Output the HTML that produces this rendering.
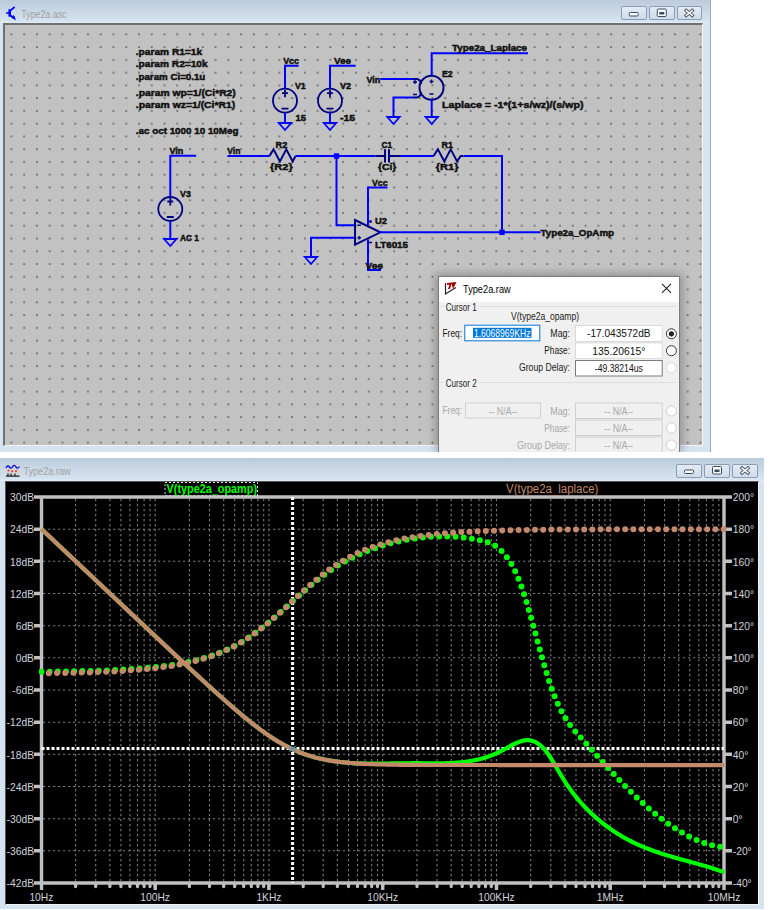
<!DOCTYPE html><html><head><meta charset="utf-8"><style>
html,body{margin:0;padding:0;background:#fff;width:770px;height:910px;overflow:hidden;font-family:"Liberation Sans", sans-serif;}
.abs{position:absolute;}
</style></head><body>
<div class="abs" style="left:0;top:0;width:710px;height:452px;background:linear-gradient(#bccbdb 0px,#d5e3f0 21px,#dfeaf7 22.5px,#d6e3f1 24px,#d6e3f1 100%);border-right:1px solid #9ca9b8;"></div><div class="abs" style="left:3px;top:23px;width:700px;height:423px;background:#c2c2c2;box-sizing:border-box;border-top:2px solid #707070;border-left:2px solid #707070;border-bottom:1px solid #f4f4f4;border-right:1px solid #f4f4f4;"></div><div class="abs" style="left:621px;top:6px;width:25.5px;height:14px;box-sizing:border-box;border:1px solid #8d9db4;border-radius:2px;background:linear-gradient(#e3ebf5,#cfdbea);"></div><div class="abs" style="left:649px;top:6px;width:25.5px;height:14px;box-sizing:border-box;border:1px solid #8d9db4;border-radius:2px;background:linear-gradient(#e3ebf5,#cfdbea);"></div><div class="abs" style="left:676.5px;top:6px;width:25.5px;height:14px;box-sizing:border-box;border:1px solid #8d9db4;border-radius:2px;background:linear-gradient(#e3ebf5,#cfdbea);"></div><svg class="abs" style="left:0;top:0;overflow:visible" width="1" height="1"><rect x="629.25" y="12.5" width="9" height="3.5" rx="1" fill="#fff" stroke="#3c4a60" stroke-width="1"/><rect x="657.25" y="9.0" width="9" height="7.5" rx="1" fill="#fff" stroke="#3c4a60" stroke-width="1"/><rect x="659.25" y="12.0" width="5" height="2.5" fill="#3c4a60"/><path d="M686.25,10.6 L692.25,15.4 M692.25,10.6 L686.25,15.4" stroke="#3c4a60" stroke-width="3.2" stroke-linecap="square"/><path d="M686.25,10.6 L692.25,15.4 M692.25,10.6 L686.25,15.4" stroke="#fff" stroke-width="1.5" stroke-linecap="square"/></svg><svg class="abs" style="left:0;top:0" width="30" height="24"><path d="M14.6,7 L10,10.8 M10,15 L14.2,18.4 M6,13 L9.5,13" stroke="#0000ff" stroke-width="1.7" fill="none"/><path d="M9.7,9.3 L9.7,16.7" stroke="#0000ff" stroke-width="2.6"/><path d="M11.6,17.4 L15.3,19.6 L13.8,15.6 Z" fill="#0000ff" stroke="#0000ff" stroke-width="0.8"/></svg><svg class="abs" style="left:0;top:0" width="120" height="24"><text x="21.3" y="17.7" font-family="Liberation Sans" font-size="10.9" fill="#9c9c9c" textLength="45.2" lengthAdjust="spacingAndGlyphs">Type2a.asc</text></svg><svg class="abs" style="left:0;top:0" width="709" height="451"><defs><pattern id="dots" x="10.4" y="33.3" width="12.76" height="12.76" patternUnits="userSpaceOnUse"><rect x="0" y="0.4" width="2" height="1.3" fill="#585858"/></pattern><clipPath id="cv"><rect x="5" y="25" width="697" height="420"/></clipPath></defs><rect x="5" y="25" width="697" height="420" fill="url(#dots)"/><g clip-path="url(#cv)"><text x="135.8" y="54.5" font-family="Liberation Sans" font-weight="bold" font-size="9.8" fill="#111" stroke="#111" stroke-width="0.5" text-anchor="start" textLength="66.3" lengthAdjust="spacingAndGlyphs">.param R1=1k</text><text x="135.8" y="67" font-family="Liberation Sans" font-weight="bold" font-size="9.8" fill="#111" stroke="#111" stroke-width="0.5" text-anchor="start" textLength="71.8" lengthAdjust="spacingAndGlyphs">.param R2=10k</text><text x="135.8" y="80" font-family="Liberation Sans" font-weight="bold" font-size="9.8" fill="#111" stroke="#111" stroke-width="0.5" text-anchor="start" textLength="69.5" lengthAdjust="spacingAndGlyphs">.param Ci=0.1u</text><text x="135.8" y="95.6" font-family="Liberation Sans" font-weight="bold" font-size="9.8" fill="#111" stroke="#111" stroke-width="0.5" text-anchor="start" textLength="100.0" lengthAdjust="spacingAndGlyphs">.param wp=1/(Ci*R2)</text><text x="135.8" y="108.3" font-family="Liberation Sans" font-weight="bold" font-size="9.8" fill="#111" stroke="#111" stroke-width="0.5" text-anchor="start" textLength="99.4" lengthAdjust="spacingAndGlyphs">.param wz=1/(Ci*R1)</text><text x="135.8" y="133.8" font-family="Liberation Sans" font-weight="bold" font-size="9.8" fill="#111" stroke="#111" stroke-width="0.5" text-anchor="start" textLength="102.7" lengthAdjust="spacingAndGlyphs">.ac oct 1000 10 10Meg</text><polyline points="298.6,65.7 285,65.7 285,88.7" fill="none" stroke="#0000ff" stroke-width="2"/><circle cx="285" cy="100.7" r="12" fill="none" stroke="#000080" stroke-width="1.8"/><path d="M282,93.2 L288,93.2 M285,89.7 L285,97.2 M281.5,108.7 L288.5,108.7" stroke="#000080" stroke-width="1.8"/><polyline points="285,112.7 285,123" fill="none" stroke="#0000ff" stroke-width="2"/><path d="M278.8,123 L291.2,123 L285,130 Z" fill="none" stroke="#0000ff" stroke-width="1.8" stroke-linejoin="miter"/><text x="283.2" y="63.7" font-family="Liberation Sans" font-weight="bold" font-size="9.8" fill="#111" stroke="#111" stroke-width="0.5" text-anchor="start" textLength="15.8" lengthAdjust="spacingAndGlyphs">Vcc</text><text x="294.9" y="89.4" font-family="Liberation Sans" font-weight="bold" font-size="9.8" fill="#111" stroke="#111" stroke-width="0.5" text-anchor="start" textLength="10.7" lengthAdjust="spacingAndGlyphs">V1</text><text x="295.5" y="121" font-family="Liberation Sans" font-weight="bold" font-size="9.8" fill="#111" stroke="#111" stroke-width="0.5" text-anchor="start" textLength="10.5" lengthAdjust="spacingAndGlyphs">15</text><polyline points="355.7,65.7 330,65.7 330,88.7" fill="none" stroke="#0000ff" stroke-width="2"/><circle cx="330" cy="100.7" r="12" fill="none" stroke="#000080" stroke-width="1.8"/><path d="M327,93.2 L333,93.2 M330,89.7 L330,97.2 M326.5,108.7 L333.5,108.7" stroke="#000080" stroke-width="1.8"/><polyline points="330,112.7 330,123" fill="none" stroke="#0000ff" stroke-width="2"/><path d="M323.8,123 L336.2,123 L330,130 Z" fill="none" stroke="#0000ff" stroke-width="1.8" stroke-linejoin="miter"/><text x="334" y="63.7" font-family="Liberation Sans" font-weight="bold" font-size="9.8" fill="#111" stroke="#111" stroke-width="0.5" text-anchor="start" textLength="17.0" lengthAdjust="spacingAndGlyphs">Vee</text><text x="339.9" y="89.4" font-family="Liberation Sans" font-weight="bold" font-size="9.8" fill="#111" stroke="#111" stroke-width="0.5" text-anchor="start" textLength="11.1" lengthAdjust="spacingAndGlyphs">V2</text><text x="339.9" y="121" font-family="Liberation Sans" font-weight="bold" font-size="9.8" fill="#111" stroke="#111" stroke-width="0.5" text-anchor="start" textLength="15.2" lengthAdjust="spacingAndGlyphs">-15</text><text x="366.4" y="83" font-family="Liberation Sans" font-weight="bold" font-size="9.8" fill="#111" stroke="#111" stroke-width="0.5" text-anchor="start" textLength="13.9" lengthAdjust="spacingAndGlyphs">Vin</text><polyline points="380.3,79 413,79" fill="none" stroke="#0000ff" stroke-width="2"/><polyline points="393.5,117 393.5,97.5 413,97.5" fill="none" stroke="#0000ff" stroke-width="2"/><path d="M413,79 L417,79 Q421,80 421,84 M413,97.5 L417,97.5 Q421,96.5 421,92" fill="none" stroke="#000080" stroke-width="2"/><circle cx="431.5" cy="87.8" r="12" fill="none" stroke="#000080" stroke-width="2"/><path d="M413,82 L417,82 M415,80 L415,84 M413,94.5 L417,94.5 M429.5,81.5 L433.5,81.5 M431.5,79.5 L431.5,83.5 M429.5,94 L433.5,94" stroke="#000080" stroke-width="1.3"/><path d="M387.3,117 L399.7,117 L393.5,124 Z" fill="none" stroke="#0000ff" stroke-width="1.8" stroke-linejoin="miter"/><polyline points="528,53.2 431.7,53.2 431.7,75.8" fill="none" stroke="#0000ff" stroke-width="2"/><polyline points="431.7,99.8 431.7,117" fill="none" stroke="#0000ff" stroke-width="2"/><path d="M425.5,117 L437.9,117 L431.7,124 Z" fill="none" stroke="#0000ff" stroke-width="1.8" stroke-linejoin="miter"/><text x="452" y="50.9" font-family="Liberation Sans" font-weight="bold" font-size="9.8" fill="#111" stroke="#111" stroke-width="0.5" text-anchor="start" textLength="75.0" lengthAdjust="spacingAndGlyphs">Type2a_Laplace</text><text x="442" y="76.8" font-family="Liberation Sans" font-weight="bold" font-size="9.8" fill="#111" stroke="#111" stroke-width="0.5" text-anchor="start" textLength="10.7" lengthAdjust="spacingAndGlyphs">E2</text><text x="442" y="108.3" font-family="Liberation Sans" font-weight="bold" font-size="9.8" fill="#111" stroke="#111" stroke-width="0.5" text-anchor="start" textLength="141.5" lengthAdjust="spacingAndGlyphs">Laplace = -1*(1+s/wz)/(s/wp)</text><polyline points="196.2,155.8 170.3,155.8 170.3,197" fill="none" stroke="#0000ff" stroke-width="2"/><circle cx="170.3" cy="209" r="12" fill="none" stroke="#000080" stroke-width="1.8"/><path d="M167.3,201.5 L173.3,201.5 M170.3,198 L170.3,205.5 M166.8,217 L173.8,217" stroke="#000080" stroke-width="1.8"/><polyline points="170.3,221 170.3,239" fill="none" stroke="#0000ff" stroke-width="2"/><path d="M164.10000000000002,239 L176.5,239 L170.3,246 Z" fill="none" stroke="#0000ff" stroke-width="1.8" stroke-linejoin="miter"/><text x="169.5" y="154.2" font-family="Liberation Sans" font-weight="bold" font-size="9.8" fill="#111" stroke="#111" stroke-width="0.5" text-anchor="start" textLength="13.8" lengthAdjust="spacingAndGlyphs">Vin</text><text x="180" y="197.3" font-family="Liberation Sans" font-weight="bold" font-size="9.8" fill="#111" stroke="#111" stroke-width="0.5" text-anchor="start" textLength="10.8" lengthAdjust="spacingAndGlyphs">V3</text><text x="180" y="240.9" font-family="Liberation Sans" font-weight="bold" font-size="9.8" fill="#111" stroke="#111" stroke-width="0.5" text-anchor="start" textLength="19.0" lengthAdjust="spacingAndGlyphs">AC 1</text><text x="227.3" y="154.2" font-family="Liberation Sans" font-weight="bold" font-size="9.8" fill="#111" stroke="#111" stroke-width="0.5" text-anchor="start" textLength="13.1" lengthAdjust="spacingAndGlyphs">Vin</text><polyline points="227.4,156 269.5,156" fill="none" stroke="#0000ff" stroke-width="2"/><polyline points="269.5,156 273.5,149.3 279.9,161.4 286.3,149.3 292.7,161.4 295.5,156" fill="none" stroke="#000080" stroke-width="2"/><polyline points="295.5,156 375.7,156" fill="none" stroke="#0000ff" stroke-width="2"/><text x="275.5" y="147.6" font-family="Liberation Sans" font-weight="bold" font-size="9.8" fill="#111" stroke="#111" stroke-width="0.5" text-anchor="start" textLength="11.8" lengthAdjust="spacingAndGlyphs">R2</text><text x="270" y="169.6" font-family="Liberation Sans" font-weight="bold" font-size="9.8" fill="#111" stroke="#111" stroke-width="0.5" text-anchor="start" textLength="22.7" lengthAdjust="spacingAndGlyphs">{R2}</text><rect x="333.8" y="153.3" width="5.4" height="5.4" fill="#0000ff"/><path d="M375.7,156 L385,156 M389,156 L400,156 M385,149.3 L385,162.5 M389,149.3 L389,162.5" fill="none" stroke="#000080" stroke-width="2"/><polyline points="400,156 433.6,156" fill="none" stroke="#0000ff" stroke-width="2"/><text x="381.4" y="147.6" font-family="Liberation Sans" font-weight="bold" font-size="9.8" fill="#111" stroke="#111" stroke-width="0.5" text-anchor="start" textLength="10.6" lengthAdjust="spacingAndGlyphs">C1</text><text x="378" y="169.8" font-family="Liberation Sans" font-weight="bold" font-size="9.8" fill="#111" stroke="#111" stroke-width="0.5" text-anchor="start" textLength="18.4" lengthAdjust="spacingAndGlyphs">{Ci}</text><polyline points="433.6,156 437.9,149.3 444.3,161.4 450.7,149.3 457.1,161.4 460.7,156 463.6,156" fill="none" stroke="#000080" stroke-width="2"/><text x="441.4" y="147.6" font-family="Liberation Sans" font-weight="bold" font-size="9.8" fill="#111" stroke="#111" stroke-width="0.5" text-anchor="start" textLength="11.5" lengthAdjust="spacingAndGlyphs">R1</text><text x="435.7" y="169.8" font-family="Liberation Sans" font-weight="bold" font-size="9.8" fill="#111" stroke="#111" stroke-width="0.5" text-anchor="start" textLength="22.9" lengthAdjust="spacingAndGlyphs">{R1}</text><polyline points="463.6,156 502,156 502,232.3" fill="none" stroke="#0000ff" stroke-width="2"/><polyline points="336.5,156 336.5,225.2 355,225.2" fill="none" stroke="#0000ff" stroke-width="2"/><polyline points="311,257 311,237.8 355,237.8" fill="none" stroke="#0000ff" stroke-width="2"/><path d="M304.8,257 L317.2,257 L311,264 Z" fill="none" stroke="#0000ff" stroke-width="1.8" stroke-linejoin="miter"/><path d="M355,220 L380.4,232.3 L355,244.7 Z" fill="none" stroke="#000080" stroke-width="2"/><path d="M357.5,225.2 L361,225.2 M357.5,237.8 L361,237.8 M359.2,236 L359.2,239.6 M369,221.5 L372,221.5 M370.5,220 L370.5,223 M369,242.5 L372,242.5" stroke="#000080" stroke-width="1.4"/><polyline points="387.5,187.5 368,187.5 368,225" fill="none" stroke="#0000ff" stroke-width="2"/><polyline points="368,239.5 368,270 381,270" fill="none" stroke="#0000ff" stroke-width="2"/><polyline points="380.4,232.3 540.6,232.3" fill="none" stroke="#0000ff" stroke-width="2"/><rect x="499.3" y="229.6" width="5.4" height="5.4" fill="#0000ff"/><text x="372" y="186.3" font-family="Liberation Sans" font-weight="bold" font-size="9.8" fill="#111" stroke="#111" stroke-width="0.5" text-anchor="start" textLength="15.5" lengthAdjust="spacingAndGlyphs">Vcc</text><text x="365.5" y="268.8" font-family="Liberation Sans" font-weight="bold" font-size="9.8" fill="#111" stroke="#111" stroke-width="0.5" text-anchor="start" textLength="17.5" lengthAdjust="spacingAndGlyphs">Vee</text><text x="375" y="223.9" font-family="Liberation Sans" font-weight="bold" font-size="9.8" fill="#111" stroke="#111" stroke-width="0.5" text-anchor="start" textLength="12.0" lengthAdjust="spacingAndGlyphs">U2</text><text x="375" y="248.3" font-family="Liberation Sans" font-weight="bold" font-size="9.8" fill="#111" stroke="#111" stroke-width="0.5" text-anchor="start" textLength="33.0" lengthAdjust="spacingAndGlyphs">LT6015</text><text x="540.6" y="236.1" font-family="Liberation Sans" font-weight="bold" font-size="9.8" fill="#111" stroke="#111" stroke-width="0.5" text-anchor="start" textLength="73.4" lengthAdjust="spacingAndGlyphs">Type2a_OpAmp</text></g></svg><div class="abs" style="left:0;top:0;width:770px;height:460px;overflow:hidden;"><div class="abs" style="left:437.5px;top:276px;width:242px;height:175.5px;box-shadow:0 0 9px 2px rgba(0,0,0,0.28);"></div><div class="abs" style="left:437.5px;top:276px;width:242px;height:175.5px;overflow:hidden;box-sizing:border-box;border:1px solid #7a7a7a;border-bottom:none;background:#f0f0f0;"><div class="abs" style="left:0;top:0;width:240px;height:25px;background:#fff;"></div></div><svg class="abs" style="left:0;top:0;overflow:visible" width="1" height="1"><path d="M445.5,283 L445.5,294 L456,287.5" fill="none" stroke="#222" stroke-width="1.2"/><path d="M447,283 L456.5,282 L455,284 L451.5,284 L450,289 L448,289 L449.5,284.5 L447,285z M451.5,283.5 L456,283 L453,289" fill="#a00000"/><path d="M662,283.8 L671,292.8 M671,283.8 L662,292.8" stroke="#222" stroke-width="1.1"/></svg><svg class="abs" style="left:0;top:0" width="770" height="460"><text x="463" y="292.5" font-family="Liberation Sans" font-size="11.3" fill="#000" text-anchor="start" textLength="47.7" lengthAdjust="spacingAndGlyphs">Type2a.raw</text><path d="M440.5,306.5 L444,306.5 M479.5,306.5 L676,306.5" stroke="#dcdcdc" stroke-width="1"/><path d="M440.5,382.5 L444,382.5 M479.5,382.5 L676,382.5" stroke="#dcdcdc" stroke-width="1"/><text x="445.7" y="310.5" font-family="Liberation Sans" font-size="10.2" fill="#1a1a1a" text-anchor="start" textLength="31" lengthAdjust="spacingAndGlyphs">Cursor 1</text><text x="511" y="319.5" font-family="Liberation Sans" font-size="10.2" fill="#1a1a1a" text-anchor="start" textLength="68" lengthAdjust="spacingAndGlyphs">V(type2a_opamp)</text><rect x="464.8" y="325.2" width="75" height="15.6" fill="#fff" stroke="#0078d7" stroke-width="1"/><rect x="473" y="327.8" width="58.5" height="10" fill="#0078d7"/><text x="474" y="336.8" font-family="Liberation Sans" font-size="10.2" fill="#fff" text-anchor="start" textLength="56.5" lengthAdjust="spacingAndGlyphs">1.6068969KHz</text><text x="462" y="337" font-family="Liberation Sans" font-size="10.2" fill="#1a1a1a" text-anchor="end" textLength="19.5" lengthAdjust="spacingAndGlyphs">Freq:</text><text x="570" y="337.3" font-family="Liberation Sans" font-size="10.2" fill="#1a1a1a" text-anchor="end" textLength="19.7" lengthAdjust="spacingAndGlyphs">Mag:</text><text x="570" y="354.3" font-family="Liberation Sans" font-size="10.2" fill="#1a1a1a" text-anchor="end" textLength="25.7" lengthAdjust="spacingAndGlyphs">Phase:</text><text x="570" y="371.4" font-family="Liberation Sans" font-size="10.2" fill="#1a1a1a" text-anchor="end" textLength="51" lengthAdjust="spacingAndGlyphs">Group Delay:</text><rect x="575.5" y="325.5" width="86.7" height="16" fill="#fff" stroke="#dadada" stroke-width="1"/><text x="618.8" y="337.1" font-family="Liberation Sans" font-size="10.6" fill="#111" text-anchor="middle" textLength="63.4" lengthAdjust="spacingAndGlyphs">-17.043572dB</text><rect x="575.5" y="342.9" width="86.7" height="15.5" fill="#fff" stroke="#dadada" stroke-width="1"/><text x="618.8" y="354.5" font-family="Liberation Sans" font-size="10.6" fill="#111" text-anchor="middle" textLength="53" lengthAdjust="spacingAndGlyphs">135.20615°</text><rect x="575.5" y="360.5" width="86.7" height="15.5" fill="#fff" stroke="#7a7a7a" stroke-width="1"/><text x="618.8" y="372.1" font-family="Liberation Sans" font-size="10.6" fill="#111" text-anchor="middle" textLength="48" lengthAdjust="spacingAndGlyphs">-49.38214us</text><circle cx="671.4" cy="333.8" r="5" fill="#fff" stroke="#333" stroke-width="1"/><circle cx="671.4" cy="333.8" r="2.6" fill="#222"/><circle cx="671.4" cy="350.7" r="5" fill="#fff" stroke="#333" stroke-width="1"/><circle cx="671.4" cy="367.7" r="5" fill="#fff" stroke="#d8d8d8" stroke-width="1"/><text x="445.7" y="386.8" font-family="Liberation Sans" font-size="10.2" fill="#1a1a1a" text-anchor="start" textLength="31" lengthAdjust="spacingAndGlyphs">Cursor 2</text><text x="462" y="414.3" font-family="Liberation Sans" font-size="10.2" fill="#a8a8a8" text-anchor="end" textLength="19.5" lengthAdjust="spacingAndGlyphs">Freq:</text><rect x="465.5" y="403" width="75" height="15" fill="#f0f0f0" stroke="#cfcfcf" stroke-width="1"/><text x="503" y="414.5" font-family="Liberation Sans" font-size="10.2" fill="#a8a8a8" text-anchor="middle" textLength="29" lengthAdjust="spacingAndGlyphs">-- N/A--</text><text x="570" y="414.5" font-family="Liberation Sans" font-size="10.2" fill="#a8a8a8" text-anchor="end" textLength="19.7" lengthAdjust="spacingAndGlyphs">Mag:</text><text x="570" y="431.5" font-family="Liberation Sans" font-size="10.2" fill="#a8a8a8" text-anchor="end" textLength="25.7" lengthAdjust="spacingAndGlyphs">Phase:</text><text x="570" y="448.5" font-family="Liberation Sans" font-size="10.2" fill="#a8a8a8" text-anchor="end" textLength="53" lengthAdjust="spacingAndGlyphs">Group Delay:</text><rect x="575.5" y="403" width="86.7" height="15.5" fill="#f0f0f0" stroke="#cfcfcf" stroke-width="1"/><text x="618.8" y="414.6" font-family="Liberation Sans" font-size="10.2" fill="#a8a8a8" text-anchor="middle" textLength="29" lengthAdjust="spacingAndGlyphs">-- N/A--</text><circle cx="671.4" cy="411" r="5" fill="#fff" stroke="#d0d0d0" stroke-width="1"/><rect x="575.5" y="420" width="86.7" height="15.5" fill="#f0f0f0" stroke="#cfcfcf" stroke-width="1"/><text x="618.8" y="431.6" font-family="Liberation Sans" font-size="10.2" fill="#a8a8a8" text-anchor="middle" textLength="29" lengthAdjust="spacingAndGlyphs">-- N/A--</text><circle cx="671.4" cy="428" r="5" fill="#fff" stroke="#d0d0d0" stroke-width="1"/><rect x="575.5" y="437" width="86.7" height="15.5" fill="#f0f0f0" stroke="#cfcfcf" stroke-width="1"/><text x="618.8" y="448.6" font-family="Liberation Sans" font-size="10.2" fill="#a8a8a8" text-anchor="middle" textLength="29" lengthAdjust="spacingAndGlyphs">-- N/A--</text><circle cx="671.4" cy="445" r="5" fill="#fff" stroke="#d0d0d0" stroke-width="1"/></svg></div><div class="abs" style="left:0;top:452px;width:770px;height:6px;background:#fff;"></div><div class="abs" style="left:0;top:458px;width:763.5px;height:451px;background:linear-gradient(#bccbdb 0px,#d5e3f0 21px,#dfeaf7 22.5px,#d6e3f1 24px,#d6e3f1 100%);"></div><div class="abs" style="left:5px;top:480.5px;width:753.5px;height:424px;background:#000;box-sizing:border-box;border-top:1px solid #555;border-left:1px solid #555;border-right:1px solid #f4f4f4;border-bottom:1px solid #f4f4f4;"></div><div class="abs" style="left:676px;top:463.5px;width:26px;height:14px;box-sizing:border-box;border:1px solid #8d9db4;border-radius:2px;background:linear-gradient(#e3ebf5,#cfdbea);"></div><div class="abs" style="left:704px;top:463.5px;width:26px;height:14px;box-sizing:border-box;border:1px solid #8d9db4;border-radius:2px;background:linear-gradient(#e3ebf5,#cfdbea);"></div><div class="abs" style="left:732px;top:463.5px;width:26px;height:14px;box-sizing:border-box;border:1px solid #8d9db4;border-radius:2px;background:linear-gradient(#e3ebf5,#cfdbea);"></div><svg class="abs" style="left:0;top:0;overflow:visible" width="1" height="1"><rect x="684.5" y="470.0" width="9" height="3.5" rx="1" fill="#fff" stroke="#3c4a60" stroke-width="1"/><rect x="712.5" y="466.5" width="9" height="7.5" rx="1" fill="#fff" stroke="#3c4a60" stroke-width="1"/><rect x="714.5" y="469.5" width="5" height="2.5" fill="#3c4a60"/><path d="M742.0,468.1 L748.0,472.9 M748.0,468.1 L742.0,472.9" stroke="#3c4a60" stroke-width="3.2" stroke-linecap="square"/><path d="M742.0,468.1 L748.0,472.9 M748.0,468.1 L742.0,472.9" stroke="#fff" stroke-width="1.5" stroke-linecap="square"/></svg><svg class="abs" style="left:0;top:458px" width="24" height="24"><rect x="6" y="6.5" width="13.5" height="12" fill="#d4d4d4"/><path d="M6,10 Q7.7,6.5 9.4,9 Q11,11.5 12.7,8.5 Q14.4,6 16,9 Q17.6,11.5 19.5,8.5" stroke="#0010f0" stroke-width="1.4" fill="none"/><circle cx="8.5" cy="12.5" r="1" fill="#f03030"/><circle cx="12.2" cy="13.3" r="1" fill="#f03030"/><circle cx="16" cy="13" r="1" fill="#f03030"/><path d="M6,18.2 L19.5,18.2 M8,15.5 L8,18 M11,15.5 L11,18 M15,15.5 L15,18" stroke="#202020" stroke-width="1.2"/></svg><svg class="abs" style="left:0;top:458px" width="120" height="24"><text x="23.4" y="16.6" font-family="Liberation Sans" font-size="10.7" fill="#a2a2a2" textLength="47.2" lengthAdjust="spacingAndGlyphs">Type2a.raw</text></svg><svg class="abs" style="left:0;top:0" width="770" height="910"><defs><clipPath id="pc"><rect x="39" y="498" width="688" height="386"/></clipPath></defs><path d="M75.6,499 L75.6,882 M95.7,499 L95.7,882 M109.9,499 L109.9,882 M120.9,499 L120.9,882 M129.9,499 L129.9,882 M137.5,499 L137.5,882 M144.1,499 L144.1,882 M150.0,499 L150.0,882 M155.2,499 L155.2,882 M189.4,499 L189.4,882 M209.5,499 L209.5,882 M223.7,499 L223.7,882 M234.7,499 L234.7,882 M243.7,499 L243.7,882 M251.3,499 L251.3,882 M257.9,499 L257.9,882 M263.7,499 L263.7,882 M268.9,499 L268.9,882 M303.2,499 L303.2,882 M323.2,499 L323.2,882 M337.4,499 L337.4,882 M348.5,499 L348.5,882 M357.5,499 L357.5,882 M365.1,499 L365.1,882 M371.7,499 L371.7,882 M377.5,499 L377.5,882 M382.7,499 L382.7,882 M417.0,499 L417.0,882 M437.0,499 L437.0,882 M451.2,499 L451.2,882 M462.2,499 L462.2,882 M471.2,499 L471.2,882 M478.9,499 L478.9,882 M485.5,499 L485.5,882 M491.3,499 L491.3,882 M496.5,499 L496.5,882 M530.7,499 L530.7,882 M550.8,499 L550.8,882 M565.0,499 L565.0,882 M576.0,499 L576.0,882 M585.0,499 L585.0,882 M592.6,499 L592.6,882 M599.2,499 L599.2,882 M605.0,499 L605.0,882 M610.2,499 L610.2,882 M644.5,499 L644.5,882 M664.5,499 L664.5,882 M678.7,499 L678.7,882 M689.8,499 L689.8,882 M698.8,499 L698.8,882 M706.4,499 L706.4,882 M713.0,499 L713.0,882 M718.8,499 L718.8,882 " stroke="#7c7c7c" stroke-width="1.1" stroke-dasharray="2.2 2.8"/><path d="M43,529.2 L723,529.2 M43,561.3 L723,561.3 M43,593.5 L723,593.5 M43,625.7 L723,625.7 M43,657.8 L723,657.8 M43,690.0 L723,690.0 M43,722.2 L723,722.2 M43,754.3 L723,754.3 M43,786.5 L723,786.5 M43,818.7 L723,818.7 M43,850.8 L723,850.8 " stroke="#7c7c7c" stroke-width="1.1" stroke-dasharray="2.2 2.8"/><path d="M34,497 L732,497 M41.5,497 L41.5,890 M724,497 L724,890 M34,883 L732,883" stroke="#c0c0c0" stroke-width="3.4" fill="none"/><path d="M34,529.2 L41.5,529.2 M724,529.2 L732,529.2 M34,561.3 L41.5,561.3 M724,561.3 L732,561.3 M34,593.5 L41.5,593.5 M724,593.5 L732,593.5 M34,625.7 L41.5,625.7 M724,625.7 L732,625.7 M34,657.8 L41.5,657.8 M724,657.8 L732,657.8 M34,690.0 L41.5,690.0 M724,690.0 L732,690.0 M34,722.2 L41.5,722.2 M724,722.2 L732,722.2 M34,754.3 L41.5,754.3 M724,754.3 L732,754.3 M34,786.5 L41.5,786.5 M724,786.5 L732,786.5 M34,818.7 L41.5,818.7 M724,818.7 L732,818.7 M34,850.8 L41.5,850.8 M724,850.8 L732,850.8 " stroke="#c0c0c0" stroke-width="3.4" fill="none"/><path d="M75.6,884 L75.6,886.6 M95.7,884 L95.7,886.6 M109.9,884 L109.9,886.6 M120.9,884 L120.9,886.6 M129.9,884 L129.9,886.6 M137.5,884 L137.5,886.6 M144.1,884 L144.1,886.6 M150.0,884 L150.0,886.6 M155.2,884 L155.2,886.6 M189.4,884 L189.4,886.6 M209.5,884 L209.5,886.6 M223.7,884 L223.7,886.6 M234.7,884 L234.7,886.6 M243.7,884 L243.7,886.6 M251.3,884 L251.3,886.6 M257.9,884 L257.9,886.6 M263.7,884 L263.7,886.6 M268.9,884 L268.9,886.6 M303.2,884 L303.2,886.6 M323.2,884 L323.2,886.6 M337.4,884 L337.4,886.6 M348.5,884 L348.5,886.6 M357.5,884 L357.5,886.6 M365.1,884 L365.1,886.6 M371.7,884 L371.7,886.6 M377.5,884 L377.5,886.6 M382.7,884 L382.7,886.6 M417.0,884 L417.0,886.6 M437.0,884 L437.0,886.6 M451.2,884 L451.2,886.6 M462.2,884 L462.2,886.6 M471.2,884 L471.2,886.6 M478.9,884 L478.9,886.6 M485.5,884 L485.5,886.6 M491.3,884 L491.3,886.6 M496.5,884 L496.5,886.6 M530.7,884 L530.7,886.6 M550.8,884 L550.8,886.6 M565.0,884 L565.0,886.6 M576.0,884 L576.0,886.6 M585.0,884 L585.0,886.6 M592.6,884 L592.6,886.6 M599.2,884 L599.2,886.6 M605.0,884 L605.0,886.6 M610.2,884 L610.2,886.6 M644.5,884 L644.5,886.6 M664.5,884 L664.5,886.6 M678.7,884 L678.7,886.6 M689.8,884 L689.8,886.6 M698.8,884 L698.8,886.6 M706.4,884 L706.4,886.6 M713.0,884 L713.0,886.6 M718.8,884 L718.8,886.6 " stroke="#c0c0c0" stroke-width="3.2" stroke-linecap="round" fill="none"/><path d="M155.2,883 L155.2,890" stroke="#c0c0c0" stroke-width="3.4"/><path d="M268.9,883 L268.9,890" stroke="#c0c0c0" stroke-width="3.4"/><path d="M382.7,883 L382.7,890" stroke="#c0c0c0" stroke-width="3.4"/><path d="M496.5,883 L496.5,890" stroke="#c0c0c0" stroke-width="3.4"/><path d="M610.2,883 L610.2,890" stroke="#c0c0c0" stroke-width="3.4"/><path d="M292.6,497 L292.6,883 M41.5,748.6 L724,748.6" stroke="#ffffff" stroke-width="3" stroke-dasharray="3 2"/><g clip-path="url(#pc)"><path d="M41.4,529.0 L42.4,529.9 L43.4,530.9 L44.4,531.8 L45.4,532.7 L46.4,533.7 L47.4,534.6 L48.4,535.6 L49.4,536.5 L50.4,537.5 L51.4,538.4 L52.4,539.3 L53.4,540.3 L54.4,541.2 L55.4,542.2 L56.4,543.1 L57.4,544.0 L58.4,545.0 L59.4,545.9 L60.4,546.9 L61.4,547.8 L62.4,548.8 L63.4,549.7 L64.4,550.6 L65.4,551.6 L66.4,552.5 L67.4,553.5 L68.4,554.4 L69.4,555.4 L70.4,556.3 L71.4,557.2 L72.4,558.2 L73.4,559.1 L74.4,560.1 L75.4,561.0 L76.4,562.0 L77.4,562.9 L78.4,563.8 L79.4,564.8 L80.4,565.7 L81.4,566.7 L82.4,567.6 L83.4,568.5 L84.4,569.5 L85.4,570.4 L86.4,571.4 L87.4,572.3 L88.4,573.3 L89.4,574.2 L90.4,575.1 L91.4,576.1 L92.4,577.0 L93.4,578.0 L94.4,578.9 L95.4,579.9 L96.4,580.8 L97.4,581.7 L98.4,582.7 L99.4,583.6 L100.4,584.6 L101.4,585.5 L102.4,586.4 L103.4,587.4 L104.4,588.3 L105.4,589.3 L106.4,590.2 L107.4,591.2 L108.4,592.1 L109.4,593.0 L110.4,594.0 L111.4,594.9 L112.4,595.9 L113.4,596.8 L114.4,597.8 L115.4,598.7 L116.4,599.6 L117.4,600.6 L118.4,601.5 L119.4,602.5 L120.4,603.4 L121.4,604.3 L122.4,605.3 L123.4,606.2 L124.4,607.2 L125.4,608.1 L126.4,609.1 L127.4,610.0 L128.4,610.9 L129.4,611.9 L130.4,612.8 L131.4,613.8 L132.4,614.7 L133.4,615.6 L134.4,616.6 L135.4,617.5 L136.4,618.5 L137.4,619.4 L138.4,620.3 L139.4,621.3 L140.4,622.2 L141.4,623.2 L142.4,624.1 L143.4,625.0 L144.4,626.0 L145.4,626.9 L146.4,627.9 L147.4,628.8 L148.4,629.7 L149.4,630.7 L150.4,631.6 L151.4,632.6 L152.4,633.5 L153.4,634.4 L154.4,635.4 L155.4,636.3 L156.4,637.3 L157.4,638.2 L158.4,639.1 L159.4,640.1 L160.4,641.0 L161.4,641.9 L162.4,642.9 L163.4,643.8 L164.4,644.8 L165.4,645.7 L166.4,646.6 L167.4,647.6 L168.4,648.5 L169.4,649.4 L170.4,650.4 L171.4,651.3 L172.4,652.2 L173.4,653.2 L174.4,654.1 L175.4,655.1 L176.4,656.0 L177.4,656.9 L178.4,657.9 L179.4,658.8 L180.4,659.7 L181.4,660.6 L182.4,661.6 L183.4,662.5 L184.4,663.4 L185.4,664.4 L186.4,665.3 L187.4,666.2 L188.4,667.2 L189.4,668.1 L190.4,669.0 L191.4,669.9 L192.4,670.9 L193.4,671.8 L194.4,672.7 L195.4,673.6 L196.4,674.6 L197.4,675.5 L198.4,676.4 L199.4,677.3 L200.4,678.3 L201.4,679.2 L202.4,680.1 L203.4,681.0 L204.4,681.9 L205.4,682.8 L206.4,683.8 L207.4,684.7 L208.4,685.6 L209.4,686.5 L210.4,687.4 L211.4,688.3 L212.4,689.2 L213.4,690.1 L214.4,691.0 L215.4,691.9 L216.4,692.8 L217.4,693.7 L218.4,694.6 L219.4,695.5 L220.4,696.4 L221.4,697.3 L222.4,698.2 L223.4,699.1 L224.4,700.0 L225.4,700.9 L226.4,701.7 L227.4,702.6 L228.4,703.5 L229.4,704.4 L230.4,705.2 L231.4,706.1 L232.4,707.0 L233.4,707.8 L234.4,708.7 L235.4,709.6 L236.4,710.4 L237.4,711.3 L238.4,712.1 L239.4,712.9 L240.4,713.8 L241.4,714.6 L242.4,715.5 L243.4,716.3 L244.4,717.1 L245.4,717.9 L246.4,718.7 L247.4,719.6 L248.4,720.4 L249.4,721.2 L250.4,722.0 L251.4,722.8 L252.4,723.5 L253.4,724.3 L254.4,725.1 L255.4,725.9 L256.4,726.6 L257.4,727.4 L258.4,728.1 L259.4,728.9 L260.4,729.6 L261.4,730.4 L262.4,731.1 L263.4,731.8 L264.4,732.5 L265.4,733.2 L266.4,733.9 L267.4,734.6 L268.4,735.3 L269.4,736.0 L270.4,736.6 L271.4,737.3 L272.4,738.0 L273.4,738.6 L274.4,739.2 L275.4,739.9 L276.4,740.5 L277.4,741.1 L278.4,741.7 L279.4,742.3 L280.4,742.9 L281.4,743.4 L282.4,744.0 L283.4,744.6 L284.4,745.1 L285.4,745.7 L286.4,746.2 L287.4,746.7 L288.4,747.2 L289.4,747.7 L290.4,748.2 L291.4,748.7 L292.4,749.2 L293.4,749.6 L294.4,750.1 L295.4,750.5 L296.4,750.9 L297.4,751.4 L298.4,751.8 L299.4,752.2 L300.4,752.6 L301.4,753.0 L302.4,753.3 L303.4,753.7 L304.4,754.1 L305.4,754.4 L306.4,754.8 L307.4,755.1 L308.4,755.4 L309.4,755.7 L310.4,756.0 L311.4,756.3 L312.4,756.6 L313.4,756.9 L314.4,757.2 L315.4,757.5 L316.4,757.7 L317.4,758.0 L318.4,758.2 L319.4,758.4 L320.4,758.7 L321.4,758.9 L322.4,759.1 L323.4,759.3 L324.4,759.5 L325.4,759.7 L326.4,759.9 L327.4,760.1 L328.4,760.3 L329.4,760.4 L330.4,760.6 L331.4,760.8 L332.4,760.9 L333.4,761.1 L334.4,761.2 L335.4,761.4 L336.4,761.5 L337.4,761.6 L338.4,761.8 L339.4,761.9 L340.4,762.0 L341.4,762.1 L342.4,762.2 L343.4,762.3 L344.4,762.4 L345.4,762.5 L346.4,762.6 L347.4,762.7 L348.4,762.8 L349.4,762.9 L350.4,763.0 L351.4,763.0 L352.4,763.1 L353.4,763.2 L354.4,763.3 L355.4,763.3 L356.4,763.4 L357.4,763.5 L358.4,763.5 L359.4,763.6 L360.4,763.4 L361.4,763.4 L362.4,763.4 L363.4,763.5 L364.4,763.5 L365.4,763.5 L366.4,763.5 L367.4,763.5 L368.4,763.5 L369.4,763.5 L370.4,763.6 L371.4,763.6 L372.4,763.6 L373.4,763.6 L374.4,763.6 L375.4,763.6 L376.4,763.6 L377.4,763.6 L378.4,763.6 L379.4,763.5 L380.4,763.5 L381.4,763.5 L382.4,763.5 L383.4,763.5 L384.4,763.5 L385.4,763.5 L386.4,763.5 L387.4,763.5 L388.4,763.5 L389.4,763.5 L390.4,763.4 L391.4,763.4 L392.4,763.4 L393.4,763.4 L394.4,763.4 L395.4,763.4 L396.4,763.4 L397.4,763.4 L398.4,763.4 L399.4,763.3 L400.4,763.3 L401.4,763.3 L402.4,763.3 L403.4,763.3 L404.4,763.3 L405.4,763.3 L406.4,763.3 L407.4,763.3 L408.4,763.3 L409.4,763.3 L410.4,763.3 L411.4,763.2 L412.4,763.2 L413.4,763.2 L414.4,763.2 L415.4,763.2 L416.4,763.2 L417.4,763.2 L418.4,763.2 L419.4,763.2 L420.4,763.2 L421.4,763.3 L422.4,763.3 L423.4,763.3 L424.4,763.3 L425.4,763.3 L426.4,763.3 L427.4,763.3 L428.4,763.3 L429.4,763.3 L430.4,763.3 L431.4,763.3 L432.4,763.3 L433.4,763.3 L434.4,763.3 L435.4,763.4 L436.4,763.4 L437.4,763.4 L438.4,763.3 L439.4,763.3 L440.4,763.3 L441.4,763.3 L442.4,763.3 L443.4,763.3 L444.4,763.3 L445.4,763.3 L446.4,763.2 L447.4,763.2 L448.4,763.2 L449.4,763.1 L450.4,763.1 L451.4,763.0 L452.4,763.0 L453.4,762.9 L454.4,762.9 L455.4,762.8 L456.4,762.7 L457.4,762.7 L458.4,762.6 L459.4,762.5 L460.4,762.4 L461.4,762.3 L462.4,762.2 L463.4,762.1 L464.4,762.0 L465.4,761.8 L466.4,761.7 L467.4,761.5 L468.4,761.4 L469.4,761.2 L470.4,761.1 L471.4,760.9 L472.4,760.7 L473.4,760.5 L474.4,760.3 L475.4,760.1 L476.4,759.9 L477.4,759.7 L478.4,759.4 L479.4,759.2 L480.4,758.9 L481.4,758.7 L482.4,758.4 L483.4,758.1 L484.4,757.8 L485.4,757.5 L486.4,757.2 L487.4,756.9 L488.4,756.5 L489.4,756.2 L490.4,755.8 L491.4,755.4 L492.4,755.0 L493.4,754.6 L494.4,754.2 L495.4,753.8 L496.4,753.3 L497.4,752.9 L498.4,752.4 L499.4,751.9 L500.4,751.5 L501.4,750.9 L502.4,750.4 L503.4,749.9 L504.4,749.3 L505.4,748.8 L506.4,748.2 L507.4,747.7 L508.4,747.1 L509.4,746.6 L510.4,746.0 L511.4,745.5 L512.4,744.9 L513.4,744.4 L514.4,743.9 L515.4,743.5 L516.4,743.0 L517.4,742.6 L518.4,742.2 L519.4,741.8 L520.4,741.4 L521.4,741.1 L522.4,740.9 L523.4,740.6 L524.4,740.4 L525.4,740.3 L526.4,740.2 L527.4,740.2 L528.4,740.2 L529.4,740.3 L530.4,740.4 L531.4,740.6 L532.4,740.9 L533.4,741.2 L534.4,741.6 L535.4,742.0 L536.4,742.6 L537.4,743.2 L538.4,743.8 L539.4,744.6 L540.4,745.4 L541.4,746.2 L542.4,747.2 L543.4,748.2 L544.4,749.3 L545.4,750.5 L546.4,751.8 L547.4,753.1 L548.4,754.5 L549.4,756.0 L550.4,757.5 L551.4,759.1 L552.4,760.7 L553.4,762.4 L554.4,764.0 L555.4,765.7 L556.4,767.4 L557.4,769.1 L558.4,770.8 L559.4,772.6 L560.4,774.2 L561.4,775.9 L562.4,777.5 L563.4,779.1 L564.4,780.7 L565.4,782.3 L566.4,783.8 L567.4,785.3 L568.4,786.7 L569.4,788.1 L570.4,789.5 L571.4,790.9 L572.4,792.2 L573.4,793.6 L574.4,794.8 L575.4,796.1 L576.4,797.4 L577.4,798.6 L578.4,799.8 L579.4,800.9 L580.4,802.1 L581.4,803.2 L582.4,804.3 L583.4,805.4 L584.4,806.5 L585.4,807.5 L586.4,808.6 L587.4,809.6 L588.4,810.6 L589.4,811.5 L590.4,812.5 L591.4,813.5 L592.4,814.4 L593.4,815.3 L594.4,816.2 L595.4,817.1 L596.4,818.0 L597.4,818.8 L598.4,819.7 L599.4,820.5 L600.4,821.4 L601.4,822.2 L602.4,823.0 L603.4,823.8 L604.4,824.5 L605.4,825.3 L606.4,826.0 L607.4,826.8 L608.4,827.5 L609.4,828.2 L610.4,828.9 L611.4,829.6 L612.4,830.3 L613.4,831.0 L614.4,831.7 L615.4,832.3 L616.4,833.0 L617.4,833.6 L618.4,834.2 L619.4,834.8 L620.4,835.4 L621.4,836.0 L622.4,836.6 L623.4,837.2 L624.4,837.8 L625.4,838.3 L626.4,838.9 L627.4,839.4 L628.4,839.9 L629.4,840.5 L630.4,841.0 L631.4,841.5 L632.4,842.0 L633.4,842.5 L634.4,842.9 L635.4,843.4 L636.4,843.9 L637.4,844.3 L638.4,844.8 L639.4,845.2 L640.4,845.7 L641.4,846.1 L642.4,846.5 L643.4,846.9 L644.4,847.4 L645.4,847.8 L646.4,848.2 L647.4,848.6 L648.4,848.9 L649.4,849.3 L650.4,849.7 L651.4,850.1 L652.4,850.4 L653.4,850.8 L654.4,851.2 L655.4,851.5 L656.4,851.9 L657.4,852.2 L658.4,852.5 L659.4,852.9 L660.4,853.2 L661.4,853.5 L662.4,853.9 L663.4,854.2 L664.4,854.5 L665.4,854.8 L666.4,855.1 L667.4,855.4 L668.4,855.7 L669.4,856.0 L670.4,856.3 L671.4,856.6 L672.4,856.9 L673.4,857.2 L674.4,857.5 L675.4,857.8 L676.4,858.0 L677.4,858.3 L678.4,858.6 L679.4,858.9 L680.4,859.2 L681.4,859.4 L682.4,859.7 L683.4,860.0 L684.4,860.3 L685.4,860.5 L686.4,860.8 L687.4,861.1 L688.4,861.4 L689.4,861.6 L690.4,861.9 L691.4,862.2 L692.4,862.5 L693.4,862.7 L694.4,863.0 L695.4,863.3 L696.4,863.6 L697.4,863.8 L698.4,864.1 L699.4,864.4 L700.4,864.7 L701.4,865.0 L702.4,865.3 L703.4,865.6 L704.4,865.8 L705.4,866.1 L706.4,866.4 L707.4,866.7 L708.4,867.0 L709.4,867.3 L710.4,867.6 L711.4,868.0 L712.4,868.3 L713.4,868.6 L714.4,868.9 L715.4,869.2 L716.4,869.6 L717.4,869.9 L718.4,870.2 L719.4,870.6 L720.4,870.9 L721.4,871.3 L722.4,871.6 L723.4,872.0 L724.4,872.3" fill="none" stroke="#00ff00" stroke-width="4.2" stroke-linejoin="round"/><path d="M41.4,671.7 L42.4,671.7 L43.4,671.7 L44.4,671.7 L45.4,671.7 L46.4,671.7 L47.4,671.7 L48.4,671.7 L49.4,671.7 L50.4,671.7 L51.4,671.6 L52.4,671.6 L53.4,671.6 L54.4,671.6 L55.4,671.6 L56.4,671.6 L57.4,671.6 L58.4,671.6 L59.4,671.6 L60.4,671.5 L61.4,671.5 L62.4,671.5 L63.4,671.5 L64.4,671.5 L65.4,671.5 L66.4,671.4 L67.4,671.4 L68.4,671.4 L69.4,671.4 L70.4,671.4 L71.4,671.4 L72.4,671.3 L73.4,671.3 L74.4,671.3 L75.4,671.3 L76.4,671.3 L77.4,671.3 L78.4,671.2 L79.4,671.2 L80.4,671.2 L81.4,671.2 L82.4,671.1 L83.4,671.1 L84.4,671.1 L85.4,671.1 L86.4,671.0 L87.4,671.0 L88.4,671.0 L89.4,671.0 L90.4,670.9 L91.4,670.9 L92.4,670.9 L93.4,670.9 L94.4,670.8 L95.4,670.8 L96.4,670.8 L97.4,670.7 L98.4,670.7 L99.4,670.7 L100.4,670.6 L101.4,670.6 L102.4,670.6 L103.4,670.5 L104.4,670.5 L105.4,670.4 L106.4,670.4 L107.4,670.4 L108.4,670.3 L109.4,670.3 L110.4,670.2 L111.4,670.2 L112.4,670.1 L113.4,670.1 L114.4,670.0 L115.4,670.0 L116.4,670.0 L117.4,669.9 L118.4,669.9 L119.4,669.8 L120.4,669.7 L121.4,669.7 L122.4,669.6 L123.4,669.6 L124.4,669.5 L125.4,669.5 L126.4,669.4 L127.4,669.3 L128.4,669.3 L129.4,669.2 L130.4,669.1 L131.4,669.1 L132.4,669.0 L133.4,668.9 L134.4,668.9 L135.4,668.8 L136.4,668.7 L137.4,668.6 L138.4,668.6 L139.4,668.5 L140.4,668.4 L141.4,668.3 L142.4,668.2 L143.4,668.1 L144.4,668.0 L145.4,668.0 L146.4,667.9 L147.4,667.8 L148.4,667.7 L149.4,667.6 L150.4,667.5 L151.4,667.4 L152.4,667.3 L153.4,667.2 L154.4,667.1 L155.4,667.0 L156.4,666.9 L157.4,666.8 L158.4,666.7 L159.4,666.6 L160.4,666.4 L161.4,666.3 L162.4,666.2 L163.4,666.1 L164.4,666.0 L165.4,665.8 L166.4,665.7 L167.4,665.6 L168.4,665.4 L169.4,665.3 L170.4,665.2 L171.4,665.0 L172.4,664.9 L173.4,664.7 L174.4,664.6 L175.4,664.4 L176.4,664.2 L177.4,664.1 L178.4,663.9 L179.4,663.7 L180.4,663.6 L181.4,663.4 L182.4,663.2 L183.4,663.0 L184.4,662.8 L185.4,662.6 L186.4,662.4 L187.4,662.2 L188.4,662.0 L189.4,661.8 L190.4,661.6 L191.4,661.4 L192.4,661.1 L193.4,660.9 L194.4,660.7 L195.4,660.4 L196.4,660.2 L197.4,659.9 L198.4,659.7 L199.4,659.4 L200.4,659.1 L201.4,658.9 L202.4,658.6 L203.4,658.3 L204.4,658.0 L205.4,657.7 L206.4,657.4 L207.4,657.1 L208.4,656.8 L209.4,656.5 L210.4,656.1 L211.4,655.8 L212.4,655.5 L213.4,655.1 L214.4,654.8 L215.4,654.4 L216.4,654.0 L217.4,653.7 L218.4,653.3 L219.4,652.9 L220.4,652.5 L221.4,652.1 L222.4,651.7 L223.4,651.2 L224.4,650.8 L225.4,650.4 L226.4,649.9 L227.4,649.5 L228.4,649.0 L229.4,648.6 L230.4,648.1 L231.4,647.6 L232.4,647.1 L233.4,646.5 L234.4,646.0 L235.4,645.5 L236.4,644.9 L237.4,644.4 L238.4,643.8 L239.4,643.3 L240.4,642.7 L241.4,642.1 L242.4,641.5 L243.4,640.9 L244.4,640.3 L245.4,639.6 L246.4,639.0 L247.4,638.4 L248.4,637.7 L249.4,637.0 L250.4,636.4 L251.4,635.7 L252.4,635.0 L253.4,634.3 L254.4,633.6 L255.4,632.8 L256.4,632.1 L257.4,631.4 L258.4,630.6 L259.4,629.9 L260.4,629.1 L261.4,628.3 L262.4,627.5 L263.4,626.8 L264.4,626.0 L265.4,625.1 L266.4,624.3 L267.4,623.5 L268.4,622.7 L269.4,621.8 L270.4,621.0 L271.4,620.1 L272.4,619.3 L273.4,618.4 L274.4,617.5 L275.4,616.7 L276.4,615.8 L277.4,614.9 L278.4,614.0 L279.4,613.1 L280.4,612.3 L281.4,611.4 L282.4,610.5 L283.4,609.6 L284.4,608.7 L285.4,607.8 L286.4,606.9 L287.4,606.0 L288.4,605.1 L289.4,604.2 L290.4,603.3 L291.4,602.4 L292.4,601.5 L293.4,600.6 L294.4,599.7 L295.4,598.8 L296.4,597.9 L297.4,597.0 L298.4,596.1 L299.4,595.2 L300.4,594.3 L301.4,593.5 L302.4,592.6 L303.4,591.7 L304.4,590.8 L305.4,590.0 L306.4,589.1 L307.4,588.2 L308.4,587.4 L309.4,586.5 L310.4,585.7 L311.4,584.9 L312.4,584.0 L313.4,583.2 L314.4,582.4 L315.4,581.6 L316.4,580.8 L317.4,580.0 L318.4,579.2 L319.4,578.4 L320.4,577.7 L321.4,576.9 L322.4,576.2 L323.4,575.4 L324.4,574.7 L325.4,573.9 L326.4,573.2 L327.4,572.5 L328.4,571.8 L329.4,571.1 L330.4,570.4 L331.4,569.8 L332.4,569.1 L333.4,568.4 L334.4,567.8 L335.4,567.2 L336.4,566.5 L337.4,565.9 L338.4,565.3 L339.4,564.7 L340.4,564.1 L341.4,563.5 L342.4,562.9 L343.4,562.3 L344.4,561.8 L345.4,561.2 L346.4,560.7 L347.4,560.1 L348.4,559.6 L349.4,559.1 L350.4,558.6 L351.4,558.1 L352.4,557.6 L353.4,557.1 L354.4,556.6 L355.4,556.1 L356.4,555.7 L357.4,555.2 L358.4,554.8 L359.4,554.3 L360.4,553.9 L361.4,553.4 L362.4,553.0 L363.4,552.6 L364.4,552.2 L365.4,551.8 L366.4,551.4 L367.4,551.0 L368.4,550.6 L369.4,550.2 L370.4,549.8 L371.4,549.4 L372.4,549.1 L373.4,548.7 L374.4,548.4 L375.4,548.0 L376.4,547.7 L377.4,547.3 L378.4,547.0 L379.4,546.7 L380.4,546.3 L381.4,546.0 L382.4,545.7 L383.4,545.4 L384.4,545.1 L385.4,544.8 L386.4,544.5 L387.4,544.3 L388.4,544.0 L389.4,543.7 L390.4,543.4 L391.4,543.2 L392.4,542.9 L393.4,542.7 L394.4,542.4 L395.4,542.2 L396.4,541.9 L397.4,541.7 L398.4,541.5 L399.4,541.3 L400.4,541.0 L401.4,540.8 L402.4,540.6 L403.4,540.4 L404.4,540.2 L405.4,540.0 L406.4,539.8 L407.4,539.7 L408.4,539.5 L409.4,539.3 L410.4,539.1 L411.4,539.0 L412.4,538.8 L413.4,538.7 L414.4,538.5 L415.4,538.4 L416.4,538.2 L417.4,538.1 L418.4,538.0 L419.4,537.8 L420.4,537.7 L421.4,537.6 L422.4,537.5 L423.4,537.4 L424.4,537.3 L425.4,537.2 L426.4,537.1 L427.4,537.0 L428.4,537.0 L429.4,536.9 L430.4,536.8 L431.4,536.8 L432.4,536.7 L433.4,536.6 L434.4,536.6 L435.4,536.5 L436.4,536.5 L437.4,536.5 L438.4,536.4 L439.4,536.4 L440.4,536.4 L441.4,536.4 L442.4,536.4 L443.4,536.4 L444.4,536.4 L445.4,536.4 L446.4,536.4 L447.4,536.4 L448.4,536.5 L449.4,536.5 L450.4,536.5 L451.4,536.6 L452.4,536.6 L453.4,536.7 L454.4,536.7 L455.4,536.8 L456.4,536.9 L457.4,536.9 L458.4,537.0 L459.4,537.1 L460.4,537.2 L461.4,537.3 L462.4,537.4 L463.4,537.5 L464.4,537.6 L465.4,537.7 L466.4,537.9 L467.4,538.0 L468.4,538.1 L469.4,538.3 L470.4,538.5 L471.4,538.6 L472.4,538.8 L473.4,538.9 L474.4,539.1 L475.4,539.3 L476.4,539.5 L477.4,539.7 L478.4,539.9 L479.4,540.1 L480.4,540.3 L481.4,540.6 L482.4,540.8 L483.4,541.1 L484.4,541.3 L485.4,541.6 L486.4,541.9 L487.4,542.2 L488.4,542.6 L489.4,543.0 L490.4,543.4 L491.4,543.8 L492.4,544.3 L493.4,544.9 L494.4,545.4 L495.4,546.0 L496.4,546.7 L497.4,547.4 L498.4,548.2 L499.4,549.0 L500.4,549.9 L501.4,550.8 L502.4,551.8 L503.4,552.9 L504.4,554.0 L505.4,555.2 L506.4,556.5 L507.4,557.9 L508.4,559.3 L509.4,560.8 L510.4,562.4 L511.4,564.1 L512.4,565.9 L513.4,567.8 L514.4,569.7 L515.4,571.8 L516.4,574.0 L517.4,576.2 L518.4,578.6 L519.4,581.1 L520.4,583.7 L521.4,586.4 L522.4,589.2 L523.4,592.2 L524.4,595.2 L525.4,598.3 L526.4,601.6 L527.4,604.9 L528.4,608.3 L529.4,611.7 L530.4,615.2 L531.4,618.8 L532.4,622.4 L533.4,626.0 L534.4,629.7 L535.4,633.4 L536.4,637.1 L537.4,640.7 L538.4,644.4 L539.4,648.1 L540.4,651.7 L541.4,655.3 L542.4,658.9 L543.4,662.4 L544.4,665.8 L545.4,669.2 L546.4,672.5 L547.4,675.7 L548.4,678.9 L549.4,681.9 L550.4,684.9 L551.4,687.7 L552.4,690.5 L553.4,693.2 L554.4,695.7 L555.4,698.2 L556.4,700.6 L557.4,702.9 L558.4,705.2 L559.4,707.3 L560.4,709.3 L561.4,711.3 L562.4,713.1 L563.4,714.9 L564.4,716.6 L565.4,718.2 L566.4,719.8 L567.4,721.3 L568.4,722.7 L569.4,724.1 L570.4,725.5 L571.4,726.8 L572.4,728.0 L573.4,729.2 L574.4,730.4 L575.4,731.6 L576.4,732.7 L577.4,733.8 L578.4,735.0 L579.4,736.1 L580.4,737.2 L581.4,738.3 L582.4,739.4 L583.4,740.5 L584.4,741.6 L585.4,742.7 L586.4,743.8 L587.4,744.9 L588.4,746.0 L589.4,747.2 L590.4,748.3 L591.4,749.4 L592.4,750.5 L593.4,751.6 L594.4,752.7 L595.4,753.9 L596.4,755.0 L597.4,756.1 L598.4,757.2 L599.4,758.3 L600.4,759.4 L601.4,760.5 L602.4,761.7 L603.4,762.8 L604.4,763.9 L605.4,765.0 L606.4,766.1 L607.4,767.2 L608.4,768.3 L609.4,769.4 L610.4,770.5 L611.4,771.5 L612.4,772.6 L613.4,773.7 L614.4,774.8 L615.4,775.9 L616.4,776.9 L617.4,778.0 L618.4,779.0 L619.4,780.1 L620.4,781.1 L621.4,782.2 L622.4,783.2 L623.4,784.3 L624.4,785.3 L625.4,786.3 L626.4,787.3 L627.4,788.3 L628.4,789.3 L629.4,790.3 L630.4,791.3 L631.4,792.3 L632.4,793.3 L633.4,794.2 L634.4,795.2 L635.4,796.2 L636.4,797.1 L637.4,798.1 L638.4,799.0 L639.4,800.0 L640.4,800.9 L641.4,801.8 L642.4,802.7 L643.4,803.6 L644.4,804.5 L645.4,805.4 L646.4,806.3 L647.4,807.2 L648.4,808.1 L649.4,808.9 L650.4,809.8 L651.4,810.6 L652.4,811.5 L653.4,812.3 L654.4,813.1 L655.4,813.9 L656.4,814.8 L657.4,815.6 L658.4,816.3 L659.4,817.1 L660.4,817.9 L661.4,818.7 L662.4,819.4 L663.4,820.2 L664.4,820.9 L665.4,821.7 L666.4,822.4 L667.4,823.1 L668.4,823.8 L669.4,824.5 L670.4,825.2 L671.4,825.9 L672.4,826.6 L673.4,827.3 L674.4,827.9 L675.4,828.6 L676.4,829.2 L677.4,829.8 L678.4,830.4 L679.4,831.0 L680.4,831.6 L681.4,832.2 L682.4,832.8 L683.4,833.4 L684.4,833.9 L685.4,834.5 L686.4,835.0 L687.4,835.6 L688.4,836.1 L689.4,836.6 L690.4,837.1 L691.4,837.6 L692.4,838.1 L693.4,838.5 L694.4,839.0 L695.4,839.4 L696.4,839.9 L697.4,840.3 L698.4,840.7 L699.4,841.1 L700.4,841.5 L701.4,841.9 L702.4,842.3 L703.4,842.6 L704.4,843.0 L705.4,843.3 L706.4,843.6 L707.4,843.9 L708.4,844.2 L709.4,844.5 L710.4,844.8 L711.4,845.1 L712.4,845.3 L713.4,845.6 L714.4,845.8 L715.4,846.0 L716.4,846.2 L717.4,846.4 L718.4,846.6 L719.4,846.7 L720.4,846.9 L721.4,847.0 L722.4,847.2 L723.4,847.3 L724.4,847.4" fill="none" stroke="#00ff00" stroke-width="6" stroke-linecap="round" stroke-dasharray="0 8.2"/><path d="M41.4,529.0 L42.4,529.9 L43.4,530.9 L44.4,531.8 L45.4,532.7 L46.4,533.7 L47.4,534.6 L48.4,535.6 L49.4,536.5 L50.4,537.5 L51.4,538.4 L52.4,539.3 L53.4,540.3 L54.4,541.2 L55.4,542.2 L56.4,543.1 L57.4,544.0 L58.4,545.0 L59.4,545.9 L60.4,546.9 L61.4,547.8 L62.4,548.8 L63.4,549.7 L64.4,550.6 L65.4,551.6 L66.4,552.5 L67.4,553.5 L68.4,554.4 L69.4,555.4 L70.4,556.3 L71.4,557.2 L72.4,558.2 L73.4,559.1 L74.4,560.1 L75.4,561.0 L76.4,562.0 L77.4,562.9 L78.4,563.8 L79.4,564.8 L80.4,565.7 L81.4,566.7 L82.4,567.6 L83.4,568.5 L84.4,569.5 L85.4,570.4 L86.4,571.4 L87.4,572.3 L88.4,573.3 L89.4,574.2 L90.4,575.1 L91.4,576.1 L92.4,577.0 L93.4,578.0 L94.4,578.9 L95.4,579.9 L96.4,580.8 L97.4,581.7 L98.4,582.7 L99.4,583.6 L100.4,584.6 L101.4,585.5 L102.4,586.4 L103.4,587.4 L104.4,588.3 L105.4,589.3 L106.4,590.2 L107.4,591.2 L108.4,592.1 L109.4,593.0 L110.4,594.0 L111.4,594.9 L112.4,595.9 L113.4,596.8 L114.4,597.8 L115.4,598.7 L116.4,599.6 L117.4,600.6 L118.4,601.5 L119.4,602.5 L120.4,603.4 L121.4,604.3 L122.4,605.3 L123.4,606.2 L124.4,607.2 L125.4,608.1 L126.4,609.1 L127.4,610.0 L128.4,610.9 L129.4,611.9 L130.4,612.8 L131.4,613.8 L132.4,614.7 L133.4,615.6 L134.4,616.6 L135.4,617.5 L136.4,618.5 L137.4,619.4 L138.4,620.3 L139.4,621.3 L140.4,622.2 L141.4,623.2 L142.4,624.1 L143.4,625.0 L144.4,626.0 L145.4,626.9 L146.4,627.9 L147.4,628.8 L148.4,629.7 L149.4,630.7 L150.4,631.6 L151.4,632.6 L152.4,633.5 L153.4,634.4 L154.4,635.4 L155.4,636.3 L156.4,637.3 L157.4,638.2 L158.4,639.1 L159.4,640.1 L160.4,641.0 L161.4,641.9 L162.4,642.9 L163.4,643.8 L164.4,644.8 L165.4,645.7 L166.4,646.6 L167.4,647.6 L168.4,648.5 L169.4,649.4 L170.4,650.4 L171.4,651.3 L172.4,652.2 L173.4,653.2 L174.4,654.1 L175.4,655.1 L176.4,656.0 L177.4,656.9 L178.4,657.9 L179.4,658.8 L180.4,659.7 L181.4,660.6 L182.4,661.6 L183.4,662.5 L184.4,663.4 L185.4,664.4 L186.4,665.3 L187.4,666.2 L188.4,667.2 L189.4,668.1 L190.4,669.0 L191.4,669.9 L192.4,670.9 L193.4,671.8 L194.4,672.7 L195.4,673.6 L196.4,674.6 L197.4,675.5 L198.4,676.4 L199.4,677.3 L200.4,678.3 L201.4,679.2 L202.4,680.1 L203.4,681.0 L204.4,681.9 L205.4,682.8 L206.4,683.8 L207.4,684.7 L208.4,685.6 L209.4,686.5 L210.4,687.4 L211.4,688.3 L212.4,689.2 L213.4,690.1 L214.4,691.0 L215.4,691.9 L216.4,692.8 L217.4,693.7 L218.4,694.6 L219.4,695.5 L220.4,696.4 L221.4,697.3 L222.4,698.2 L223.4,699.1 L224.4,700.0 L225.4,700.9 L226.4,701.7 L227.4,702.6 L228.4,703.5 L229.4,704.4 L230.4,705.2 L231.4,706.1 L232.4,707.0 L233.4,707.8 L234.4,708.7 L235.4,709.6 L236.4,710.4 L237.4,711.3 L238.4,712.1 L239.4,712.9 L240.4,713.8 L241.4,714.6 L242.4,715.5 L243.4,716.3 L244.4,717.1 L245.4,717.9 L246.4,718.7 L247.4,719.6 L248.4,720.4 L249.4,721.2 L250.4,722.0 L251.4,722.8 L252.4,723.5 L253.4,724.3 L254.4,725.1 L255.4,725.9 L256.4,726.6 L257.4,727.4 L258.4,728.1 L259.4,728.9 L260.4,729.6 L261.4,730.4 L262.4,731.1 L263.4,731.8 L264.4,732.5 L265.4,733.2 L266.4,733.9 L267.4,734.6 L268.4,735.3 L269.4,736.0 L270.4,736.6 L271.4,737.3 L272.4,738.0 L273.4,738.6 L274.4,739.2 L275.4,739.9 L276.4,740.5 L277.4,741.1 L278.4,741.7 L279.4,742.3 L280.4,742.9 L281.4,743.4 L282.4,744.0 L283.4,744.6 L284.4,745.1 L285.4,745.7 L286.4,746.2 L287.4,746.7 L288.4,747.2 L289.4,747.7 L290.4,748.2 L291.4,748.7 L292.4,749.2 L293.4,749.6 L294.4,750.1 L295.4,750.5 L296.4,750.9 L297.4,751.4 L298.4,751.8 L299.4,752.2 L300.4,752.6 L301.4,753.0 L302.4,753.3 L303.4,753.7 L304.4,754.1 L305.4,754.4 L306.4,754.8 L307.4,755.1 L308.4,755.4 L309.4,755.7 L310.4,756.0 L311.4,756.3 L312.4,756.6 L313.4,756.9 L314.4,757.2 L315.4,757.5 L316.4,757.7 L317.4,758.0 L318.4,758.2 L319.4,758.4 L320.4,758.7 L321.4,758.9 L322.4,759.1 L323.4,759.3 L324.4,759.5 L325.4,759.7 L326.4,759.9 L327.4,760.1 L328.4,760.3 L329.4,760.4 L330.4,760.6 L331.4,760.8 L332.4,760.9 L333.4,761.1 L334.4,761.2 L335.4,761.4 L336.4,761.5 L337.4,761.6 L338.4,761.8 L339.4,761.9 L340.4,762.0 L341.4,762.1 L342.4,762.2 L343.4,762.3 L344.4,762.4 L345.4,762.5 L346.4,762.6 L347.4,762.7 L348.4,762.8 L349.4,762.9 L350.4,763.0 L351.4,763.0 L352.4,763.1 L353.4,763.2 L354.4,763.3 L355.4,763.3 L356.4,763.4 L357.4,763.5 L358.4,763.5 L359.4,763.6 L360.4,763.6 L361.4,763.7 L362.4,763.8 L363.4,763.8 L364.4,763.8 L365.4,763.9 L366.4,763.9 L367.4,764.0 L368.4,764.0 L369.4,764.1 L370.4,764.1 L371.4,764.1 L372.4,764.2 L373.4,764.2 L374.4,764.2 L375.4,764.3 L376.4,764.3 L377.4,764.3 L378.4,764.4 L379.4,764.4 L380.4,764.4 L381.4,764.4 L382.4,764.5 L383.4,764.5 L384.4,764.5 L385.4,764.5 L386.4,764.6 L387.4,764.6 L388.4,764.6 L389.4,764.6 L390.4,764.6 L391.4,764.6 L392.4,764.7 L393.4,764.7 L394.4,764.7 L395.4,764.7 L396.4,764.7 L397.4,764.7 L398.4,764.7 L399.4,764.8 L400.4,764.8 L401.4,764.8 L402.4,764.8 L403.4,764.8 L404.4,764.8 L405.4,764.8 L406.4,764.8 L407.4,764.8 L408.4,764.8 L409.4,764.9 L410.4,764.9 L411.4,764.9 L412.4,764.9 L413.4,764.9 L414.4,764.9 L415.4,764.9 L416.4,764.9 L417.4,764.9 L418.4,764.9 L419.4,764.9 L420.4,764.9 L421.4,764.9 L422.4,764.9 L423.4,764.9 L424.4,764.9 L425.4,765.0 L426.4,765.0 L427.4,765.0 L428.4,765.0 L429.4,765.0 L430.4,765.0 L431.4,765.0 L432.4,765.0 L433.4,765.0 L434.4,765.0 L435.4,765.0 L436.4,765.0 L437.4,765.0 L438.4,765.0 L439.4,765.0 L440.4,765.0 L441.4,765.0 L442.4,765.0 L443.4,765.0 L444.4,765.0 L445.4,765.0 L446.4,765.0 L447.4,765.0 L448.4,765.0 L449.4,765.0 L450.4,765.0 L451.4,765.0 L452.4,765.0 L453.4,765.0 L454.4,765.0 L455.4,765.0 L456.4,765.0 L457.4,765.0 L458.4,765.0 L459.4,765.0 L460.4,765.0 L461.4,765.0 L462.4,765.0 L463.4,765.0 L464.4,765.0 L465.4,765.0 L466.4,765.0 L467.4,765.0 L468.4,765.0 L469.4,765.0 L470.4,765.0 L471.4,765.0 L472.4,765.0 L473.4,765.0 L474.4,765.0 L475.4,765.0 L476.4,765.0 L477.4,765.0 L478.4,765.0 L479.4,765.0 L480.4,765.0 L481.4,765.0 L482.4,765.0 L483.4,765.0 L484.4,765.0 L485.4,765.0 L486.4,765.0 L487.4,765.0 L488.4,765.0 L489.4,765.0 L490.4,765.0 L491.4,765.0 L492.4,765.0 L493.4,765.0 L494.4,765.0 L495.4,765.0 L496.4,765.0 L497.4,765.0 L498.4,765.1 L499.4,765.1 L500.4,765.1 L501.4,765.1 L502.4,765.1 L503.4,765.1 L504.4,765.1 L505.4,765.1 L506.4,765.1 L507.4,765.1 L508.4,765.1 L509.4,765.1 L510.4,765.1 L511.4,765.1 L512.4,765.1 L513.4,765.1 L514.4,765.1 L515.4,765.1 L516.4,765.1 L517.4,765.1 L518.4,765.1 L519.4,765.1 L520.4,765.1 L521.4,765.1 L522.4,765.1 L523.4,765.1 L524.4,765.1 L525.4,765.1 L526.4,765.1 L527.4,765.1 L528.4,765.1 L529.4,765.1 L530.4,765.1 L531.4,765.1 L532.4,765.1 L533.4,765.1 L534.4,765.1 L535.4,765.1 L536.4,765.1 L537.4,765.1 L538.4,765.1 L539.4,765.1 L540.4,765.1 L541.4,765.1 L542.4,765.1 L543.4,765.1 L544.4,765.1 L545.4,765.1 L546.4,765.1 L547.4,765.1 L548.4,765.1 L549.4,765.1 L550.4,765.1 L551.4,765.1 L552.4,765.1 L553.4,765.1 L554.4,765.1 L555.4,765.1 L556.4,765.1 L557.4,765.1 L558.4,765.1 L559.4,765.1 L560.4,765.1 L561.4,765.1 L562.4,765.1 L563.4,765.1 L564.4,765.1 L565.4,765.1 L566.4,765.1 L567.4,765.1 L568.4,765.1 L569.4,765.1 L570.4,765.1 L571.4,765.1 L572.4,765.1 L573.4,765.1 L574.4,765.1 L575.4,765.1 L576.4,765.1 L577.4,765.1 L578.4,765.1 L579.4,765.1 L580.4,765.1 L581.4,765.1 L582.4,765.1 L583.4,765.1 L584.4,765.1 L585.4,765.1 L586.4,765.1 L587.4,765.1 L588.4,765.1 L589.4,765.1 L590.4,765.1 L591.4,765.1 L592.4,765.1 L593.4,765.1 L594.4,765.1 L595.4,765.1 L596.4,765.1 L597.4,765.1 L598.4,765.1 L599.4,765.1 L600.4,765.1 L601.4,765.1 L602.4,765.1 L603.4,765.1 L604.4,765.1 L605.4,765.1 L606.4,765.1 L607.4,765.1 L608.4,765.1 L609.4,765.1 L610.4,765.1 L611.4,765.1 L612.4,765.1 L613.4,765.1 L614.4,765.1 L615.4,765.1 L616.4,765.1 L617.4,765.1 L618.4,765.1 L619.4,765.1 L620.4,765.1 L621.4,765.1 L622.4,765.1 L623.4,765.1 L624.4,765.1 L625.4,765.1 L626.4,765.1 L627.4,765.1 L628.4,765.1 L629.4,765.1 L630.4,765.1 L631.4,765.1 L632.4,765.1 L633.4,765.1 L634.4,765.1 L635.4,765.1 L636.4,765.1 L637.4,765.1 L638.4,765.1 L639.4,765.1 L640.4,765.1 L641.4,765.1 L642.4,765.1 L643.4,765.1 L644.4,765.1 L645.4,765.1 L646.4,765.1 L647.4,765.1 L648.4,765.1 L649.4,765.1 L650.4,765.1 L651.4,765.1 L652.4,765.1 L653.4,765.1 L654.4,765.1 L655.4,765.1 L656.4,765.1 L657.4,765.1 L658.4,765.1 L659.4,765.1 L660.4,765.1 L661.4,765.1 L662.4,765.1 L663.4,765.1 L664.4,765.1 L665.4,765.1 L666.4,765.1 L667.4,765.1 L668.4,765.1 L669.4,765.1 L670.4,765.1 L671.4,765.1 L672.4,765.1 L673.4,765.1 L674.4,765.1 L675.4,765.1 L676.4,765.1 L677.4,765.1 L678.4,765.1 L679.4,765.1 L680.4,765.1 L681.4,765.1 L682.4,765.1 L683.4,765.1 L684.4,765.1 L685.4,765.1 L686.4,765.1 L687.4,765.1 L688.4,765.1 L689.4,765.1 L690.4,765.1 L691.4,765.1 L692.4,765.1 L693.4,765.1 L694.4,765.1 L695.4,765.1 L696.4,765.1 L697.4,765.1 L698.4,765.1 L699.4,765.1 L700.4,765.1 L701.4,765.1 L702.4,765.1 L703.4,765.1 L704.4,765.1 L705.4,765.1 L706.4,765.1 L707.4,765.1 L708.4,765.1 L709.4,765.1 L710.4,765.1 L711.4,765.1 L712.4,765.1 L713.4,765.1 L714.4,765.1 L715.4,765.1 L716.4,765.1 L717.4,765.1 L718.4,765.1 L719.4,765.1 L720.4,765.1 L721.4,765.1 L722.4,765.1 L723.4,765.1 L724.4,765.1" fill="none" stroke="#c4896a" stroke-width="4.2" stroke-linejoin="round"/><path d="M41.4,673.3 L42.4,673.3 L43.4,673.3 L44.4,673.3 L45.4,673.3 L46.4,673.3 L47.4,673.3 L48.4,673.2 L49.4,673.2 L50.4,673.2 L51.4,673.2 L52.4,673.2 L53.4,673.2 L54.4,673.2 L55.4,673.1 L56.4,673.1 L57.4,673.1 L58.4,673.1 L59.4,673.1 L60.4,673.1 L61.4,673.0 L62.4,673.0 L63.4,673.0 L64.4,673.0 L65.4,673.0 L66.4,673.0 L67.4,672.9 L68.4,672.9 L69.4,672.9 L70.4,672.9 L71.4,672.9 L72.4,672.8 L73.4,672.8 L74.4,672.8 L75.4,672.8 L76.4,672.7 L77.4,672.7 L78.4,672.7 L79.4,672.7 L80.4,672.6 L81.4,672.6 L82.4,672.6 L83.4,672.6 L84.4,672.5 L85.4,672.5 L86.4,672.5 L87.4,672.4 L88.4,672.4 L89.4,672.4 L90.4,672.4 L91.4,672.3 L92.4,672.3 L93.4,672.3 L94.4,672.2 L95.4,672.2 L96.4,672.2 L97.4,672.1 L98.4,672.1 L99.4,672.0 L100.4,672.0 L101.4,672.0 L102.4,671.9 L103.4,671.9 L104.4,671.8 L105.4,671.8 L106.4,671.8 L107.4,671.7 L108.4,671.7 L109.4,671.6 L110.4,671.6 L111.4,671.5 L112.4,671.5 L113.4,671.4 L114.4,671.4 L115.4,671.3 L116.4,671.3 L117.4,671.2 L118.4,671.2 L119.4,671.1 L120.4,671.1 L121.4,671.0 L122.4,670.9 L123.4,670.9 L124.4,670.8 L125.4,670.7 L126.4,670.7 L127.4,670.6 L128.4,670.6 L129.4,670.5 L130.4,670.4 L131.4,670.3 L132.4,670.3 L133.4,670.2 L134.4,670.1 L135.4,670.0 L136.4,670.0 L137.4,669.9 L138.4,669.8 L139.4,669.7 L140.4,669.6 L141.4,669.5 L142.4,669.4 L143.4,669.4 L144.4,669.3 L145.4,669.2 L146.4,669.1 L147.4,669.0 L148.4,668.9 L149.4,668.8 L150.4,668.7 L151.4,668.6 L152.4,668.4 L153.4,668.3 L154.4,668.2 L155.4,668.1 L156.4,668.0 L157.4,667.9 L158.4,667.7 L159.4,667.6 L160.4,667.5 L161.4,667.4 L162.4,667.2 L163.4,667.1 L164.4,667.0 L165.4,666.8 L166.4,666.7 L167.4,666.5 L168.4,666.4 L169.4,666.2 L170.4,666.1 L171.4,665.9 L172.4,665.7 L173.4,665.6 L174.4,665.4 L175.4,665.2 L176.4,665.0 L177.4,664.9 L178.4,664.7 L179.4,664.5 L180.4,664.3 L181.4,664.1 L182.4,663.9 L183.4,663.7 L184.4,663.5 L185.4,663.3 L186.4,663.1 L187.4,662.9 L188.4,662.6 L189.4,662.4 L190.4,662.2 L191.4,661.9 L192.4,661.7 L193.4,661.4 L194.4,661.2 L195.4,660.9 L196.4,660.7 L197.4,660.4 L198.4,660.1 L199.4,659.9 L200.4,659.6 L201.4,659.3 L202.4,659.0 L203.4,658.7 L204.4,658.4 L205.4,658.1 L206.4,657.8 L207.4,657.4 L208.4,657.1 L209.4,656.8 L210.4,656.4 L211.4,656.1 L212.4,655.7 L213.4,655.4 L214.4,655.0 L215.4,654.6 L216.4,654.2 L217.4,653.8 L218.4,653.4 L219.4,653.0 L220.4,652.6 L221.4,652.2 L222.4,651.8 L223.4,651.3 L224.4,650.9 L225.4,650.5 L226.4,650.0 L227.4,649.5 L228.4,649.0 L229.4,648.6 L230.4,648.1 L231.4,647.6 L232.4,647.1 L233.4,646.5 L234.4,646.0 L235.4,645.5 L236.4,644.9 L237.4,644.4 L238.4,643.8 L239.4,643.3 L240.4,642.7 L241.4,642.1 L242.4,641.5 L243.4,640.9 L244.4,640.3 L245.4,639.6 L246.4,639.0 L247.4,638.4 L248.4,637.7 L249.4,637.0 L250.4,636.4 L251.4,635.7 L252.4,635.0 L253.4,634.3 L254.4,633.6 L255.4,632.8 L256.4,632.1 L257.4,631.4 L258.4,630.6 L259.4,629.9 L260.4,629.1 L261.4,628.3 L262.4,627.5 L263.4,626.8 L264.4,626.0 L265.4,625.1 L266.4,624.3 L267.4,623.5 L268.4,622.7 L269.4,621.8 L270.4,621.0 L271.4,620.1 L272.4,619.3 L273.4,618.4 L274.4,617.5 L275.4,616.7 L276.4,615.8 L277.4,614.9 L278.4,614.0 L279.4,613.1 L280.4,612.2 L281.4,611.3 L282.4,610.3 L283.4,609.4 L284.4,608.5 L285.4,607.6 L286.4,606.7 L287.4,605.7 L288.4,604.8 L289.4,603.9 L290.4,602.9 L291.4,602.0 L292.4,601.1 L293.4,600.1 L294.4,599.2 L295.4,598.3 L296.4,597.4 L297.4,596.4 L298.4,595.5 L299.4,594.6 L300.4,593.7 L301.4,592.7 L302.4,591.8 L303.4,590.9 L304.4,590.0 L305.4,589.1 L306.4,588.2 L307.4,587.3 L308.4,586.4 L309.4,585.6 L310.4,584.7 L311.4,583.8 L312.4,583.0 L313.4,582.1 L314.4,581.3 L315.4,580.4 L316.4,579.6 L317.4,578.8 L318.4,577.9 L319.4,577.1 L320.4,576.3 L321.4,575.5 L322.4,574.8 L323.4,574.0 L324.4,573.2 L325.4,572.5 L326.4,571.7 L327.4,571.0 L328.4,570.2 L329.4,569.5 L330.4,568.8 L331.4,568.1 L332.4,567.4 L333.4,566.7 L334.4,566.1 L335.4,565.4 L336.4,564.7 L337.4,564.1 L338.4,563.4 L339.4,562.8 L340.4,562.2 L341.4,561.6 L342.4,561.0 L343.4,560.4 L344.4,559.8 L345.4,559.3 L346.4,558.7 L347.4,558.1 L348.4,557.6 L349.4,557.1 L350.4,556.5 L351.4,556.0 L352.4,555.5 L353.4,555.0 L354.4,554.5 L355.4,554.0 L356.4,553.6 L357.4,553.1 L358.4,552.6 L359.4,552.2 L360.4,551.7 L361.4,551.3 L362.4,550.9 L363.4,550.5 L364.4,550.0 L365.4,549.6 L366.4,549.2 L367.4,548.9 L368.4,548.5 L369.4,548.1 L370.4,547.7 L371.4,547.4 L372.4,547.0 L373.4,546.7 L374.4,546.3 L375.4,546.0 L376.4,545.7 L377.4,545.3 L378.4,545.0 L379.4,544.7 L380.4,544.4 L381.4,544.1 L382.4,543.8 L383.4,543.5 L384.4,543.2 L385.4,543.0 L386.4,542.7 L387.4,542.4 L388.4,542.2 L389.4,541.9 L390.4,541.6 L391.4,541.4 L392.4,541.2 L393.4,540.9 L394.4,540.7 L395.4,540.5 L396.4,540.2 L397.4,540.0 L398.4,539.8 L399.4,539.6 L400.4,539.4 L401.4,539.2 L402.4,539.0 L403.4,538.8 L404.4,538.6 L405.4,538.4 L406.4,538.2 L407.4,538.0 L408.4,537.9 L409.4,537.7 L410.4,537.5 L411.4,537.4 L412.4,537.2 L413.4,537.0 L414.4,536.9 L415.4,536.7 L416.4,536.6 L417.4,536.4 L418.4,536.3 L419.4,536.1 L420.4,536.0 L421.4,535.9 L422.4,535.7 L423.4,535.6 L424.4,535.5 L425.4,535.3 L426.4,535.2 L427.4,535.1 L428.4,535.0 L429.4,534.9 L430.4,534.7 L431.4,534.6 L432.4,534.5 L433.4,534.4 L434.4,534.3 L435.4,534.2 L436.4,534.1 L437.4,534.0 L438.4,533.9 L439.4,533.8 L440.4,533.7 L441.4,533.6 L442.4,533.5 L443.4,533.5 L444.4,533.4 L445.4,533.3 L446.4,533.2 L447.4,533.1 L448.4,533.0 L449.4,533.0 L450.4,532.9 L451.4,532.8 L452.4,532.7 L453.4,532.7 L454.4,532.6 L455.4,532.5 L456.4,532.5 L457.4,532.4 L458.4,532.3 L459.4,532.3 L460.4,532.2 L461.4,532.1 L462.4,532.1 L463.4,532.0 L464.4,532.0 L465.4,531.9 L466.4,531.9 L467.4,531.8 L468.4,531.8 L469.4,531.7 L470.4,531.7 L471.4,531.6 L472.4,531.6 L473.4,531.5 L474.4,531.5 L475.4,531.4 L476.4,531.4 L477.4,531.3 L478.4,531.3 L479.4,531.2 L480.4,531.2 L481.4,531.2 L482.4,531.1 L483.4,531.1 L484.4,531.0 L485.4,531.0 L486.4,531.0 L487.4,530.9 L488.4,530.9 L489.4,530.9 L490.4,530.8 L491.4,530.8 L492.4,530.8 L493.4,530.7 L494.4,530.7 L495.4,530.7 L496.4,530.6 L497.4,530.6 L498.4,530.6 L499.4,530.5 L500.4,530.5 L501.4,530.5 L502.4,530.5 L503.4,530.4 L504.4,530.4 L505.4,530.4 L506.4,530.4 L507.4,530.3 L508.4,530.3 L509.4,530.3 L510.4,530.3 L511.4,530.3 L512.4,530.2 L513.4,530.2 L514.4,530.2 L515.4,530.2 L516.4,530.1 L517.4,530.1 L518.4,530.1 L519.4,530.1 L520.4,530.1 L521.4,530.1 L522.4,530.0 L523.4,530.0 L524.4,530.0 L525.4,530.0 L526.4,530.0 L527.4,530.0 L528.4,529.9 L529.4,529.9 L530.4,529.9 L531.4,529.9 L532.4,529.9 L533.4,529.9 L534.4,529.8 L535.4,529.8 L536.4,529.8 L537.4,529.8 L538.4,529.8 L539.4,529.8 L540.4,529.8 L541.4,529.8 L542.4,529.7 L543.4,529.7 L544.4,529.7 L545.4,529.7 L546.4,529.7 L547.4,529.7 L548.4,529.7 L549.4,529.7 L550.4,529.7 L551.4,529.6 L552.4,529.6 L553.4,529.6 L554.4,529.6 L555.4,529.6 L556.4,529.6 L557.4,529.6 L558.4,529.6 L559.4,529.6 L560.4,529.6 L561.4,529.6 L562.4,529.6 L563.4,529.5 L564.4,529.5 L565.4,529.5 L566.4,529.5 L567.4,529.5 L568.4,529.5 L569.4,529.5 L570.4,529.5 L571.4,529.5 L572.4,529.5 L573.4,529.5 L574.4,529.5 L575.4,529.5 L576.4,529.5 L577.4,529.5 L578.4,529.4 L579.4,529.4 L580.4,529.4 L581.4,529.4 L582.4,529.4 L583.4,529.4 L584.4,529.4 L585.4,529.4 L586.4,529.4 L587.4,529.4 L588.4,529.4 L589.4,529.4 L590.4,529.4 L591.4,529.4 L592.4,529.4 L593.4,529.4 L594.4,529.4 L595.4,529.4 L596.4,529.4 L597.4,529.4 L598.4,529.4 L599.4,529.3 L600.4,529.3 L601.4,529.3 L602.4,529.3 L603.4,529.3 L604.4,529.3 L605.4,529.3 L606.4,529.3 L607.4,529.3 L608.4,529.3 L609.4,529.3 L610.4,529.3 L611.4,529.3 L612.4,529.3 L613.4,529.3 L614.4,529.3 L615.4,529.3 L616.4,529.3 L617.4,529.3 L618.4,529.3 L619.4,529.3 L620.4,529.3 L621.4,529.3 L622.4,529.3 L623.4,529.3 L624.4,529.3 L625.4,529.3 L626.4,529.3 L627.4,529.3 L628.4,529.3 L629.4,529.3 L630.4,529.3 L631.4,529.3 L632.4,529.3 L633.4,529.3 L634.4,529.3 L635.4,529.3 L636.4,529.3 L637.4,529.3 L638.4,529.2 L639.4,529.2 L640.4,529.2 L641.4,529.2 L642.4,529.2 L643.4,529.2 L644.4,529.2 L645.4,529.2 L646.4,529.2 L647.4,529.2 L648.4,529.2 L649.4,529.2 L650.4,529.2 L651.4,529.2 L652.4,529.2 L653.4,529.2 L654.4,529.2 L655.4,529.2 L656.4,529.2 L657.4,529.2 L658.4,529.2 L659.4,529.2 L660.4,529.2 L661.4,529.2 L662.4,529.2 L663.4,529.2 L664.4,529.2 L665.4,529.2 L666.4,529.2 L667.4,529.2 L668.4,529.2 L669.4,529.2 L670.4,529.2 L671.4,529.2 L672.4,529.2 L673.4,529.2 L674.4,529.2 L675.4,529.2 L676.4,529.2 L677.4,529.2 L678.4,529.2 L679.4,529.2 L680.4,529.2 L681.4,529.2 L682.4,529.2 L683.4,529.2 L684.4,529.2 L685.4,529.2 L686.4,529.2 L687.4,529.2 L688.4,529.2 L689.4,529.2 L690.4,529.2 L691.4,529.2 L692.4,529.2 L693.4,529.2 L694.4,529.2 L695.4,529.2 L696.4,529.2 L697.4,529.2 L698.4,529.2 L699.4,529.2 L700.4,529.2 L701.4,529.2 L702.4,529.2 L703.4,529.2 L704.4,529.2 L705.4,529.2 L706.4,529.2 L707.4,529.2 L708.4,529.2 L709.4,529.2 L710.4,529.2 L711.4,529.2 L712.4,529.2 L713.4,529.2 L714.4,529.2 L715.4,529.2 L716.4,529.2 L717.4,529.2 L718.4,529.2 L719.4,529.2 L720.4,529.2 L721.4,529.2 L722.4,529.2 L723.4,529.2 L724.4,529.2" fill="none" stroke="#c4896a" stroke-width="6" stroke-linecap="round" stroke-dasharray="0 8.2" stroke-dashoffset="0.8"/></g><path d="M289.5,746 L295.5,751.5 M295.5,746 L289.5,751.5" stroke="#4a90c8" stroke-width="1.3"/><text x="34" y="501.2" font-family="Liberation Sans" font-size="11.6" font-weight="normal" fill="#d0d4dc" text-anchor="end" textLength="24.0" lengthAdjust="spacingAndGlyphs">30dB</text><text x="732.8" y="501.2" font-family="Liberation Sans" font-size="11.6" font-weight="normal" fill="#d0d4dc" text-anchor="start" textLength="21.2" lengthAdjust="spacingAndGlyphs">200°</text><text x="34" y="533.3666666666667" font-family="Liberation Sans" font-size="11.6" font-weight="normal" fill="#d0d4dc" text-anchor="end" textLength="24.0" lengthAdjust="spacingAndGlyphs">24dB</text><text x="732.8" y="533.3666666666667" font-family="Liberation Sans" font-size="11.6" font-weight="normal" fill="#d0d4dc" text-anchor="start" textLength="21.2" lengthAdjust="spacingAndGlyphs">180°</text><text x="34" y="565.5333333333334" font-family="Liberation Sans" font-size="11.6" font-weight="normal" fill="#d0d4dc" text-anchor="end" textLength="24.0" lengthAdjust="spacingAndGlyphs">18dB</text><text x="732.8" y="565.5333333333334" font-family="Liberation Sans" font-size="11.6" font-weight="normal" fill="#d0d4dc" text-anchor="start" textLength="21.2" lengthAdjust="spacingAndGlyphs">160°</text><text x="34" y="597.7" font-family="Liberation Sans" font-size="11.6" font-weight="normal" fill="#d0d4dc" text-anchor="end" textLength="24.0" lengthAdjust="spacingAndGlyphs">12dB</text><text x="732.8" y="597.7" font-family="Liberation Sans" font-size="11.6" font-weight="normal" fill="#d0d4dc" text-anchor="start" textLength="21.2" lengthAdjust="spacingAndGlyphs">140°</text><text x="34" y="629.8666666666667" font-family="Liberation Sans" font-size="11.6" font-weight="normal" fill="#d0d4dc" text-anchor="end" textLength="18.3" lengthAdjust="spacingAndGlyphs">6dB</text><text x="732.8" y="629.8666666666667" font-family="Liberation Sans" font-size="11.6" font-weight="normal" fill="#d0d4dc" text-anchor="start" textLength="21.2" lengthAdjust="spacingAndGlyphs">120°</text><text x="34" y="662.0333333333333" font-family="Liberation Sans" font-size="11.6" font-weight="normal" fill="#d0d4dc" text-anchor="end" textLength="18.3" lengthAdjust="spacingAndGlyphs">0dB</text><text x="732.8" y="662.0333333333333" font-family="Liberation Sans" font-size="11.6" font-weight="normal" fill="#d0d4dc" text-anchor="start" textLength="21.2" lengthAdjust="spacingAndGlyphs">100°</text><text x="34" y="694.2" font-family="Liberation Sans" font-size="11.6" font-weight="normal" fill="#d0d4dc" text-anchor="end" textLength="21.7" lengthAdjust="spacingAndGlyphs">-6dB</text><text x="732.8" y="694.2" font-family="Liberation Sans" font-size="11.6" font-weight="normal" fill="#d0d4dc" text-anchor="start" textLength="15.5" lengthAdjust="spacingAndGlyphs">80°</text><text x="34" y="726.3666666666667" font-family="Liberation Sans" font-size="11.6" font-weight="normal" fill="#d0d4dc" text-anchor="end" textLength="27.4" lengthAdjust="spacingAndGlyphs">-12dB</text><text x="732.8" y="726.3666666666667" font-family="Liberation Sans" font-size="11.6" font-weight="normal" fill="#d0d4dc" text-anchor="start" textLength="15.5" lengthAdjust="spacingAndGlyphs">60°</text><text x="34" y="758.5333333333333" font-family="Liberation Sans" font-size="11.6" font-weight="normal" fill="#d0d4dc" text-anchor="end" textLength="27.4" lengthAdjust="spacingAndGlyphs">-18dB</text><text x="732.8" y="758.5333333333333" font-family="Liberation Sans" font-size="11.6" font-weight="normal" fill="#d0d4dc" text-anchor="start" textLength="15.5" lengthAdjust="spacingAndGlyphs">40°</text><text x="34" y="790.7" font-family="Liberation Sans" font-size="11.6" font-weight="normal" fill="#d0d4dc" text-anchor="end" textLength="27.4" lengthAdjust="spacingAndGlyphs">-24dB</text><text x="732.8" y="790.7" font-family="Liberation Sans" font-size="11.6" font-weight="normal" fill="#d0d4dc" text-anchor="start" textLength="15.5" lengthAdjust="spacingAndGlyphs">20°</text><text x="34" y="822.8666666666667" font-family="Liberation Sans" font-size="11.6" font-weight="normal" fill="#d0d4dc" text-anchor="end" textLength="27.4" lengthAdjust="spacingAndGlyphs">-30dB</text><text x="732.8" y="822.8666666666667" font-family="Liberation Sans" font-size="11.6" font-weight="normal" fill="#d0d4dc" text-anchor="start" textLength="9.8" lengthAdjust="spacingAndGlyphs">0°</text><text x="34" y="855.0333333333333" font-family="Liberation Sans" font-size="11.6" font-weight="normal" fill="#d0d4dc" text-anchor="end" textLength="27.4" lengthAdjust="spacingAndGlyphs">-36dB</text><text x="732.8" y="855.0333333333333" font-family="Liberation Sans" font-size="11.6" font-weight="normal" fill="#d0d4dc" text-anchor="start" textLength="18.9" lengthAdjust="spacingAndGlyphs">-20°</text><text x="34" y="887.2" font-family="Liberation Sans" font-size="11.6" font-weight="normal" fill="#d0d4dc" text-anchor="end" textLength="27.4" lengthAdjust="spacingAndGlyphs">-42dB</text><text x="732.8" y="887.2" font-family="Liberation Sans" font-size="11.6" font-weight="normal" fill="#d0d4dc" text-anchor="start" textLength="18.9" lengthAdjust="spacingAndGlyphs">-40°</text><text x="41.4" y="900.5" font-family="Liberation Sans" font-size="11.6" font-weight="normal" fill="#d0d4dc" text-anchor="middle" textLength="24.0" lengthAdjust="spacingAndGlyphs">10Hz</text><text x="155.17" y="900.5" font-family="Liberation Sans" font-size="11.6" font-weight="normal" fill="#d0d4dc" text-anchor="middle" textLength="29.7" lengthAdjust="spacingAndGlyphs">100Hz</text><text x="268.94" y="900.5" font-family="Liberation Sans" font-size="11.6" font-weight="normal" fill="#d0d4dc" text-anchor="middle" textLength="25.1" lengthAdjust="spacingAndGlyphs">1KHz</text><text x="382.71" y="900.5" font-family="Liberation Sans" font-size="11.6" font-weight="normal" fill="#d0d4dc" text-anchor="middle" textLength="30.8" lengthAdjust="spacingAndGlyphs">10KHz</text><text x="496.47999999999996" y="900.5" font-family="Liberation Sans" font-size="11.6" font-weight="normal" fill="#d0d4dc" text-anchor="middle" textLength="36.5" lengthAdjust="spacingAndGlyphs">100KHz</text><text x="610.25" y="900.5" font-family="Liberation Sans" font-size="11.6" font-weight="normal" fill="#d0d4dc" text-anchor="middle" textLength="26.8" lengthAdjust="spacingAndGlyphs">1MHz</text><text x="724.02" y="900.5" font-family="Liberation Sans" font-size="11.6" font-weight="normal" fill="#d0d4dc" text-anchor="middle" textLength="32.5" lengthAdjust="spacingAndGlyphs">10MHz</text><text x="166.6" y="493.3" font-family="Liberation Sans" font-size="12.2" font-weight="bold" fill="#00ff00" text-anchor="start" textLength="90.4" lengthAdjust="spacingAndGlyphs">V(type2a_opamp)</text><rect x="165" y="482.5" width="92.5" height="13.3" fill="none" stroke="#e0e0e0" stroke-width="1" stroke-dasharray="2 2"/><text x="506" y="493.3" font-family="Liberation Sans" font-size="12" font-weight="normal" fill="#c4896a" text-anchor="start" textLength="92.4" lengthAdjust="spacingAndGlyphs">V(type2a_laplace)</text></svg></body></html>
